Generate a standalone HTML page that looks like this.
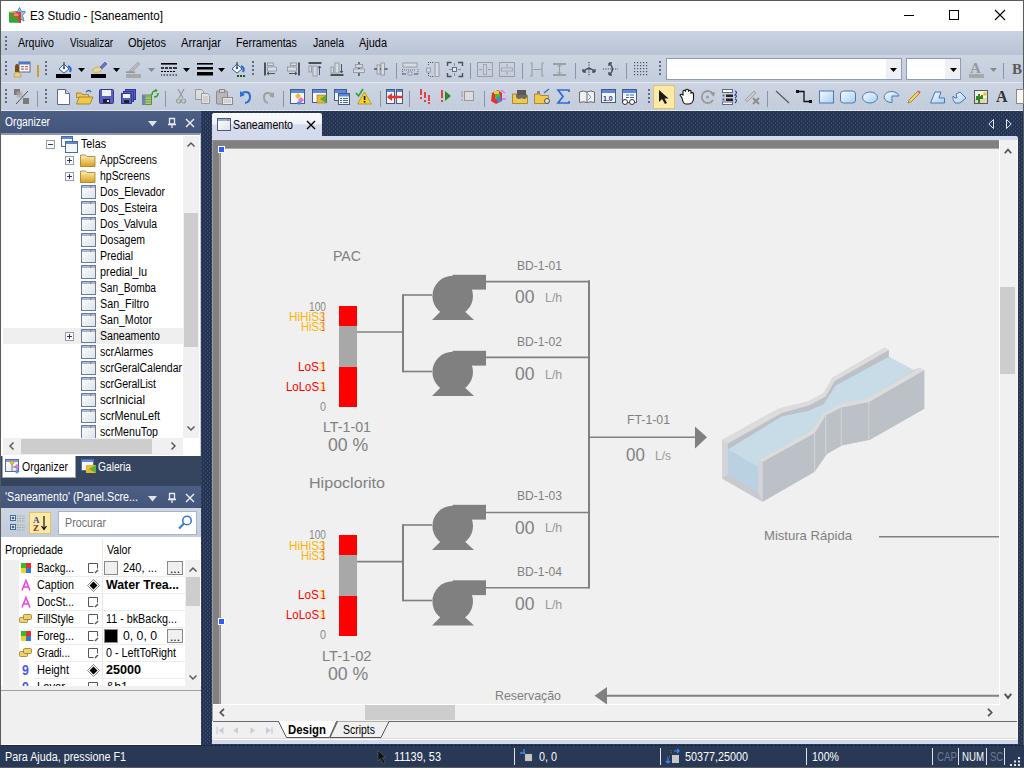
<!DOCTYPE html>
<html><head><meta charset="utf-8">
<style>
*{box-sizing:border-box;margin:0;padding:0}
html,body{width:1024px;height:768px;overflow:hidden;background:#2c3b57;font-family:'Liberation Sans', sans-serif;font-size:12px;color:#000;position:relative}
.a{position:absolute}
.t{white-space:pre}
svg{overflow:visible}
</style></head><body>
<svg class="a" style="left:0;top:110px" width="1024" height="635"><defs><pattern id="nv" width="4" height="4" patternUnits="userSpaceOnUse"><rect width="4" height="4" fill="#24334f"/><rect x="1" y="2" width="1" height="1.6" fill="#3d5178"/><rect x="3" y="0" width="1" height="1.6" fill="#3d5178"/></pattern></defs><rect width="1024" height="635" fill="url(#nv)"/></svg>
<div class="a" style="left:0px;top:0px;width:1024px;height:31px;background:#fff"></div>
<div class="a" style="left:0px;top:0px;width:1024px;height:1px;background:#5a5a5a"></div>
<div class="a" style="left:0px;top:0px;width:1px;height:768px;background:#5a5a5a"></div>
<div class="a" style="left:1023px;top:0px;width:1px;height:768px;background:#5a5a5a"></div>
<svg class="a" style="left:9px;top:7px;" width="17" height="16" viewBox="0 0 17 16"><polygon points="10.5,0.5 12.5,4.5 16.5,4.8 13.5,8.5 15,14 10.5,11.5 6,14 7.5,8.5 4.5,4.8 8.5,4.5" fill="#8ccaf4" stroke="#4a80c0" stroke-width="0.9"/>
<rect x="0" y="4.8" width="12" height="11" rx="0.8" fill="#2fa82f"/><rect x="4.2" y="5" width="7.8" height="5.5" fill="#e8453a"/><rect x="9.5" y="5" width="2.5" height="10.8" fill="#d83a30"/><rect x="5" y="6.5" width="4.5" height="2.5" fill="#f08a80"/><rect x="1" y="4.8" width="6" height="1" fill="#f0a020"/></svg>
<div class="a t" style="left:30.00px;top:8.72px;font-size:12px;line-height:14px;color:#000;font-weight:400;transform:scaleX(0.9678);transform-origin:0 0;">E3 Studio - [Saneamento]</div>
<div class="a" style="left:904px;top:15px;width:10px;height:1px;background:#000"></div>
<div class="a" style="left:949px;top:10px;width:10px;height:10px;border:1px solid #000"></div>
<svg class="a" style="left:995px;top:10px;" width="10" height="10" viewBox="0 0 10 10"><path d="M0,0 L10,10 M10,0 L0,10" stroke="#000" stroke-width="1.1"/></svg>
<div class="a" style="left:1px;top:31px;width:1022px;height:24px;background:linear-gradient(#cbd3e2,#b9c3d5)"></div>
<div class="a" style="left:5px;top:36px;width:2px;height:2px;background:#5d6b84"></div>
<div class="a" style="left:5px;top:40px;width:2px;height:2px;background:#5d6b84"></div>
<div class="a" style="left:5px;top:44px;width:2px;height:2px;background:#5d6b84"></div>
<div class="a" style="left:5px;top:48px;width:2px;height:2px;background:#5d6b84"></div>
<div class="a t" style="left:18.00px;top:36.22px;font-size:12px;line-height:14px;color:#000;font-weight:400;transform:scaleX(0.8848);transform-origin:0 0;">Arquivo</div>
<div class="a t" style="left:70.00px;top:36.22px;font-size:12px;line-height:14px;color:#000;font-weight:400;transform:scaleX(0.8299);transform-origin:0 0;">Visualizar</div>
<div class="a t" style="left:128.00px;top:36.22px;font-size:12px;line-height:14px;color:#000;font-weight:400;transform:scaleX(0.9188);transform-origin:0 0;">Objetos</div>
<div class="a t" style="left:181.00px;top:36.22px;font-size:12px;line-height:14px;color:#000;font-weight:400;transform:scaleX(0.9370);transform-origin:0 0;">Arranjar</div>
<div class="a t" style="left:236.00px;top:36.22px;font-size:12px;line-height:14px;color:#000;font-weight:400;transform:scaleX(0.8966);transform-origin:0 0;">Ferramentas</div>
<div class="a t" style="left:313.00px;top:36.22px;font-size:12px;line-height:14px;color:#000;font-weight:400;transform:scaleX(0.8763);transform-origin:0 0;">Janela</div>
<div class="a t" style="left:359.00px;top:36.22px;font-size:12px;line-height:14px;color:#000;font-weight:400;transform:scaleX(0.9120);transform-origin:0 0;">Ajuda</div>
<div class="a" style="left:1px;top:55px;width:1022px;height:27px;background:linear-gradient(#cdd5e3,#c3ccdb)"></div>
<div class="a" style="left:1px;top:82px;width:1022px;height:1px;background:#e2e7f0"></div>
<div class="a" style="left:1px;top:83px;width:1022px;height:27px;background:linear-gradient(#cdd5e3,#c3ccdb)"></div>
<div class="a" style="left:1px;top:110px;width:1022px;height:1px;background:#e2e7f0"></div>
<div class="a" style="left:0px;top:745px;width:1024px;height:23px;background:#293955"></div>
<div class="a" style="left:0px;top:767px;width:1024px;height:1px;background:#5a5a5a"></div>
<div class="a" style="left:5px;top:61px;width:2px;height:2px;background:#5d6b84"></div>
<div class="a" style="left:5px;top:65px;width:2px;height:2px;background:#5d6b84"></div>
<div class="a" style="left:5px;top:69px;width:2px;height:2px;background:#5d6b84"></div>
<div class="a" style="left:5px;top:73px;width:2px;height:2px;background:#5d6b84"></div>
<div class="a" style="left:45px;top:61px;width:2px;height:2px;background:#5d6b84"></div>
<div class="a" style="left:45px;top:65px;width:2px;height:2px;background:#5d6b84"></div>
<div class="a" style="left:45px;top:69px;width:2px;height:2px;background:#5d6b84"></div>
<div class="a" style="left:45px;top:73px;width:2px;height:2px;background:#5d6b84"></div>
<svg class="a" style="left:13px;top:61px;" width="18" height="17" viewBox="0 0 18 17"><rect x="6" y="1" width="11" height="10" fill="#fff" stroke="#5a6a8a"/><rect x="6" y="1" width="11" height="2.5" fill="#4a7ad0"/>
<rect x="8" y="5" width="3" height="1.2" fill="#e8602a"/><rect x="12" y="5" width="3" height="1.2" fill="#e8602a"/><rect x="8" y="7.5" width="3" height="1.2" fill="#4a7ad0"/><rect x="12" y="7.5" width="3" height="1.2" fill="#e8602a"/>
<path d="M4,3 Q6,3 6,6 L6,11 L2,11 L2,6 Q2,3 4,3Z" fill="#7a4a10"/><path d="M1,16 L1,14 Q2,11 4,11 Q6,11 8,14 L8,16Z" fill="#e8d27a" stroke="#a88a30" stroke-width="0.6"/></svg>
<div class="a" style="left:37px;top:65px;width:2px;height:12px;background:#e8c04a;border:1px solid #c8a030"></div>
<svg class="a" style="left:56px;top:61px;" width="17" height="17" viewBox="0 0 17 17"><path d="M3,8 L8,3 L13,8 L8,12Z" fill="#f4f8ff" stroke="#3060a8" stroke-width="1"/><path d="M8,1 L8,7" stroke="#555" stroke-width="1.4"/><circle cx="8" cy="7" r="1.2" fill="#555"/>
<path d="M12,5 Q16,7 14,11" fill="none" stroke="#2e6ad8" stroke-width="2.2"/><rect x="0" y="13" width="15" height="4" fill="#000"/></svg>
<svg class="a" style="left:78px;top:68px;" width="7" height="4" viewBox="0 0 7 4"><polygon points="0,0 7,0 3.5,4" fill="#000"/></svg>
<svg class="a" style="left:91px;top:61px;" width="17" height="17" viewBox="0 0 17 17"><path d="M1,9 Q5,5 9,6 L11,8 Q9,12 5,12 Q2,12 1,9Z" fill="#e6d690" stroke="#b09a40" stroke-width="0.6"/><path d="M9,6 L14,1 L16,3 L11,8Z" fill="#7070c8" stroke="#505090" stroke-width="0.6"/><rect x="0" y="13" width="15" height="4" fill="#000"/></svg>
<svg class="a" style="left:113px;top:68px;" width="7" height="4" viewBox="0 0 7 4"><polygon points="0,0 7,0 3.5,4" fill="#000"/></svg>
<svg class="a" style="left:126px;top:61px;" width="17" height="17" viewBox="0 0 17 17"><path d="M3,10 L12,1 L14,3 L5,12Z" fill="#b8b8b8" stroke="#9a9a9a" stroke-width="0.6"/><rect x="0" y="10.5" width="9" height="1.3" fill="#8a8a8a"/><rect x="0" y="13" width="15" height="4" fill="#a8a8a8"/></svg>
<svg class="a" style="left:148px;top:68px;" width="7" height="4" viewBox="0 0 7 4"><polygon points="0,0 7,0 3.5,4" fill="#8a8a8a"/></svg>
<svg class="a" style="left:161px;top:62px;" width="17" height="15" viewBox="0 0 17 15"><rect x="0" y="1" width="16" height="1.6" fill="#000"/><path d="M0,6 h3 M4,6 h3 M8,6 h3 M12,6 h4" stroke="#000" stroke-width="1.4"/><path d="M0,9.5 h2 M3,9.5 h2 M6,9.5 h2 M9,9.5 h2 M12,9.5 h2" stroke="#000" stroke-width="1.2"/><path d="M0,13 h1 M2.5,13 h1.5 M5.5,13 h1.5 M8.5,13 h1.5 M11.5,13 h1.5 M14.5,13 h1.5" stroke="#000" stroke-width="1.2"/></svg>
<svg class="a" style="left:183px;top:68px;" width="7" height="4" viewBox="0 0 7 4"><polygon points="0,0 7,0 3.5,4" fill="#000"/></svg>
<svg class="a" style="left:197px;top:62px;" width="17" height="15" viewBox="0 0 17 15"><rect x="0" y="1" width="16" height="1.6" fill="#000"/><rect x="0" y="5" width="16" height="2.5" fill="#000"/><rect x="0" y="10" width="16" height="3.5" fill="#000"/></svg>
<svg class="a" style="left:218px;top:68px;" width="7" height="4" viewBox="0 0 7 4"><polygon points="0,0 7,0 3.5,4" fill="#000"/></svg>
<svg class="a" style="left:229px;top:61px;" width="17" height="17" viewBox="0 0 17 17"><path d="M3,8 L8,3 L13,8 L8,12Z" fill="#f4f8ff" stroke="#3060a8" stroke-width="1"/><path d="M8,1 L8,7" stroke="#555" stroke-width="1.4"/><circle cx="8" cy="7" r="1.2" fill="#555"/>
<path d="M12,5 Q16,7 14,11" fill="none" stroke="#2e6ad8" stroke-width="2.2"/><rect x="8" y="14" width="2" height="2" fill="#1a5a1a"/><rect x="11" y="14" width="2" height="2" fill="#1a5a1a"/><rect x="14" y="14" width="2" height="2" fill="#1a5a1a"/></svg>
<div class="a" style="left:252px;top:61px;width:2px;height:2px;background:#5d6b84"></div>
<div class="a" style="left:252px;top:65px;width:2px;height:2px;background:#5d6b84"></div>
<div class="a" style="left:252px;top:69px;width:2px;height:2px;background:#5d6b84"></div>
<div class="a" style="left:252px;top:73px;width:2px;height:2px;background:#5d6b84"></div>
<svg class="a" style="left:264px;top:62px;" width="16" height="14" viewBox="0 0 16 14"><rect x="0" y="0.5" width="2" height="13" fill="#4a5260"/><rect x="3.5" y="1" width="6" height="2.5" fill="#d8dce2" stroke="#8a909a" stroke-width="0.8"/><rect x="3.5" y="5" width="9" height="4" fill="#d8dce2" stroke="#8a909a" stroke-width="0.8"/><path d="M3,11.5 h8 M3,11.5 l2,-1.5 M3,11.5 l2,1.5" stroke="#4a5260" stroke-width="1"/></svg>
<svg class="a" style="left:286px;top:62px;" width="16" height="14" viewBox="0 0 16 14"><rect x="12" y="0.5" width="2" height="13" fill="#4a5260"/><rect x="4.5" y="1" width="6" height="2.5" fill="#d8dce2" stroke="#8a909a" stroke-width="0.8"/><rect x="1.5" y="5" width="9" height="4" fill="#d8dce2" stroke="#8a909a" stroke-width="0.8"/><path d="M3,11.5 h8 M11,11.5 l-2,-1.5 M11,11.5 l-2,1.5" stroke="#4a5260" stroke-width="1"/></svg>
<svg class="a" style="left:308px;top:62px;" width="16" height="15" viewBox="0 0 16 15"><rect x="0.5" y="0" width="13" height="2" fill="#4a5260"/><rect x="1" y="4" width="2.5" height="6" fill="#d8dce2" stroke="#8a909a" stroke-width="0.8"/><rect x="5" y="4" width="4" height="10" fill="#d8dce2" stroke="#8a909a" stroke-width="0.8"/><path d="M11.5,4 v9 M11.5,4 l-1.5,2 M11.5,4 l1.5,2" stroke="#4a5260" stroke-width="1"/></svg>
<svg class="a" style="left:330px;top:62px;" width="16" height="15" viewBox="0 0 16 15"><rect x="0.5" y="12" width="13" height="2" fill="#4a5260"/><rect x="1" y="5" width="2.5" height="6" fill="#d8dce2" stroke="#8a909a" stroke-width="0.8"/><rect x="5" y="1" width="4" height="10" fill="#d8dce2" stroke="#8a909a" stroke-width="0.8"/><path d="M11.5,2 v9 M11.5,11 l-1.5,-2 M11.5,11 l1.5,-2" stroke="#4a5260" stroke-width="1"/></svg>
<svg class="a" style="left:353px;top:62px;" width="12" height="15" viewBox="0 0 12 15"><rect x="2.5" y="2.5" width="7" height="3" fill="#d8dce2" stroke="#8a909a" stroke-width="0.8"/><rect x="0.5" y="7" width="11" height="3.5" fill="#d8dce2" stroke="#8a909a" stroke-width="0.8"/><path d="M6,0 v2 M6,6 v1 M6,11 v3" stroke="#4a5260" stroke-width="1.5"/></svg>
<svg class="a" style="left:374px;top:62px;" width="14" height="15" viewBox="0 0 14 15"><rect x="3" y="3" width="3" height="9" fill="#d8dce2" stroke="#8a909a" stroke-width="0.8"/><rect x="7" y="1" width="3.5" height="12" fill="#d8dce2" stroke="#8a909a" stroke-width="0.8"/><path d="M0,7 h3 M6,7 h1 M10.5,7 h3" stroke="#4a5260" stroke-width="1.5"/></svg>
<div class="a" style="left:396px;top:63px;width:1px;height:16px;background:#8a94a6"></div>
<svg class="a" style="left:402px;top:62px;" width="17" height="15" viewBox="0 0 17 15"><rect x="1" y="1" width="14" height="4" fill="#d8dce2" stroke="#8a909a" stroke-width="0.8"/><path d="M0.5,7 v5 M16,7 v5 M2,8 h12" stroke="#4a5260" stroke-width="0.8" stroke-dasharray="1,1"/><rect x="6" y="10" width="4" height="3" fill="#d8dce2" stroke="#8a909a" stroke-width="0.8"/><path d="M0,12 h4 M12,12 h4" stroke="#4a5260" stroke-width="1.2"/></svg>
<svg class="a" style="left:426px;top:62px;" width="15" height="15" viewBox="0 0 15 15"><rect x="9" y="0.5" width="4" height="14" fill="#d8dce2" stroke="#8a909a" stroke-width="0.8"/><rect x="0.5" y="6" width="4" height="4" fill="#d8dce2" stroke="#8a909a" stroke-width="0.8"/><path d="M2.5,0 v4 M2.5,11 v4 M4,0.5 h4 M4,14.5 h4" stroke="#4a5260" stroke-width="1" stroke-dasharray="1,1"/></svg>
<svg class="a" style="left:447px;top:62px;" width="16" height="15" viewBox="0 0 16 15"><path d="M0.5,4 v-3.5 h4 M11,0.5 h4.5 v3.5 M15.5,11 v3.5 h-4 M4.5,14.5 h-4 v-3.5" fill="none" stroke="#4a5260" stroke-width="1.4"/><rect x="5.5" y="5.5" width="4" height="4" fill="#e8e8e8" stroke="#4a5260" stroke-width="0.8"/><path d="M7.5,1 v3 M7.5,11 v3 M2,7.5 h3 M11,7.5 h3" stroke="#8a909a" stroke-width="1"/></svg>
<div class="a" style="left:470px;top:63px;width:1px;height:16px;background:#8a94a6"></div>
<svg class="a" style="left:477px;top:62px;" width="16" height="15" viewBox="0 0 16 15"><rect x="0.5" y="0.5" width="15" height="14" fill="none" stroke="#9a9ea6"/><rect x="6.5" y="2.5" width="3" height="10" fill="#d0d4da" stroke="#9a9ea6" stroke-width="0.8"/><path d="M2,7.5 h3 M11,7.5 h3" stroke="#9a9ea6" stroke-width="1"/></svg>
<svg class="a" style="left:499px;top:62px;" width="16" height="15" viewBox="0 0 16 15"><rect x="0.5" y="0.5" width="15" height="14" fill="none" stroke="#9a9ea6"/><rect x="2.5" y="6" width="11" height="3" fill="#d0d4da" stroke="#9a9ea6" stroke-width="0.8"/><path d="M8,2 v3 M8,10 v3" stroke="#9a9ea6" stroke-width="1"/></svg>
<div class="a" style="left:522px;top:63px;width:1px;height:16px;background:#8a94a6"></div>
<svg class="a" style="left:529px;top:62px;" width="16" height="15" viewBox="0 0 16 15"><path d="M1,1 h2 v13 h-2 M15,1 h-2 v13 h2 M4,7.5 h8" fill="none" stroke="#9a9ea6" stroke-width="1.2"/></svg>
<svg class="a" style="left:552px;top:62px;" width="15" height="15" viewBox="0 0 15 15"><path d="M1,1 h13 v2 h-13Z M1,12 h13 v2 h-13Z" fill="#9a9ea6"/><path d="M7.5,3 v9 M5.5,5 l2,-2 l2,2 M5.5,10 l2,2 l2,-2" fill="none" stroke="#9a9ea6" stroke-width="1"/></svg>
<div class="a" style="left:575px;top:63px;width:1px;height:16px;background:#8a94a6"></div>
<svg class="a" style="left:582px;top:62px;" width="14" height="15" viewBox="0 0 14 15"><path d="M7,0 v14" stroke="#4a5260" stroke-width="1.2" stroke-dasharray="1.2,1.2"/><path d="M1,10 Q7,3 13,10 M1,10 l0,-3 M1,10 l3,0 M13,10 l0,-3 M13,10 l-3,0" fill="none" stroke="#4a5260" stroke-width="1.4"/></svg>
<svg class="a" style="left:603px;top:62px;" width="15" height="15" viewBox="0 0 15 15"><path d="M0,7 h15" stroke="#4a5260" stroke-width="1.2" stroke-dasharray="1.2,1.2"/><path d="M6,1 Q13,7 6,13 M6,1 l3,0 M6,1 l0,3 M6,13 l3,0 M6,13 l0,-3" fill="none" stroke="#4a5260" stroke-width="1.4"/></svg>
<div class="a" style="left:626px;top:63px;width:1px;height:16px;background:#8a94a6"></div>
<svg class="a" style="left:633px;top:61px;" width="15" height="15" viewBox="0 0 15 15"><rect x="1" y="1" width="1.2" height="1.2" fill="#4a5260"/><rect x="1" y="4" width="1.2" height="1.2" fill="#4a5260"/><rect x="1" y="7" width="1.2" height="1.2" fill="#4a5260"/><rect x="1" y="10" width="1.2" height="1.2" fill="#4a5260"/><rect x="1" y="13" width="1.2" height="1.2" fill="#4a5260"/><rect x="4" y="1" width="1.2" height="1.2" fill="#4a5260"/><rect x="4" y="4" width="1.2" height="1.2" fill="#4a5260"/><rect x="4" y="7" width="1.2" height="1.2" fill="#4a5260"/><rect x="4" y="10" width="1.2" height="1.2" fill="#4a5260"/><rect x="4" y="13" width="1.2" height="1.2" fill="#4a5260"/><rect x="7" y="1" width="1.2" height="1.2" fill="#4a5260"/><rect x="7" y="4" width="1.2" height="1.2" fill="#4a5260"/><rect x="7" y="7" width="1.2" height="1.2" fill="#4a5260"/><rect x="7" y="10" width="1.2" height="1.2" fill="#4a5260"/><rect x="7" y="13" width="1.2" height="1.2" fill="#4a5260"/><rect x="10" y="1" width="1.2" height="1.2" fill="#4a5260"/><rect x="10" y="4" width="1.2" height="1.2" fill="#4a5260"/><rect x="10" y="7" width="1.2" height="1.2" fill="#4a5260"/><rect x="10" y="10" width="1.2" height="1.2" fill="#4a5260"/><rect x="10" y="13" width="1.2" height="1.2" fill="#4a5260"/><rect x="13" y="1" width="1.2" height="1.2" fill="#4a5260"/><rect x="13" y="4" width="1.2" height="1.2" fill="#4a5260"/><rect x="13" y="7" width="1.2" height="1.2" fill="#4a5260"/><rect x="13" y="10" width="1.2" height="1.2" fill="#4a5260"/><rect x="13" y="13" width="1.2" height="1.2" fill="#4a5260"/></svg>
<div class="a" style="left:659px;top:61px;width:2px;height:2px;background:#5d6b84"></div>
<div class="a" style="left:659px;top:65px;width:2px;height:2px;background:#5d6b84"></div>
<div class="a" style="left:659px;top:69px;width:2px;height:2px;background:#5d6b84"></div>
<div class="a" style="left:659px;top:73px;width:2px;height:2px;background:#5d6b84"></div>
<div class="a" style="left:666px;top:58px;width:236px;height:22px;background:#fff;border:1px solid #8e9bb2"></div>
<div class="a" style="left:886px;top:59px;width:15px;height:20px;background:#eef0f4"></div>
<svg class="a" style="left:890px;top:68px;" width="7" height="4" viewBox="0 0 7 4"><polygon points="0,0 7,0 3.5,4" fill="#000"/></svg>
<div class="a" style="left:906px;top:58px;width:55px;height:22px;background:#fff;border:1px solid #8e9bb2"></div>
<div class="a" style="left:945px;top:59px;width:15px;height:20px;background:#eef0f4"></div>
<svg class="a" style="left:950px;top:68px;" width="7" height="4" viewBox="0 0 7 4"><polygon points="0,0 7,0 3.5,4" fill="#000"/></svg>
<svg class="a" style="left:969px;top:61px;" width="16" height="17" viewBox="0 0 16 17"><text x="1" y="12" font-family="Liberation Serif" font-size="15" font-weight="bold" fill="#9a9a9a">A</text><rect x="0" y="13" width="15" height="4" fill="#a8a8a8"/></svg>
<svg class="a" style="left:990px;top:68px;" width="7" height="4" viewBox="0 0 7 4"><polygon points="0,0 7,0 3.5,4" fill="#8a8a8a"/></svg>
<div class="a" style="left:1003px;top:63px;width:1px;height:16px;background:#8a94a6"></div>
<svg class="a" style="left:1011px;top:61px;" width="13" height="17" viewBox="0 0 13 17"><text x="1" y="13" font-family="Liberation Serif" font-size="15" font-weight="bold" fill="#5a5a5a">B</text></svg>
<div class="a" style="left:5px;top:89px;width:2px;height:2px;background:#5d6b84"></div>
<div class="a" style="left:5px;top:93px;width:2px;height:2px;background:#5d6b84"></div>
<div class="a" style="left:5px;top:97px;width:2px;height:2px;background:#5d6b84"></div>
<div class="a" style="left:5px;top:101px;width:2px;height:2px;background:#5d6b84"></div>
<div class="a" style="left:45px;top:89px;width:2px;height:2px;background:#5d6b84"></div>
<div class="a" style="left:45px;top:93px;width:2px;height:2px;background:#5d6b84"></div>
<div class="a" style="left:45px;top:97px;width:2px;height:2px;background:#5d6b84"></div>
<div class="a" style="left:45px;top:101px;width:2px;height:2px;background:#5d6b84"></div>
<svg class="a" style="left:14px;top:89px;" width="16" height="16" viewBox="0 0 16 16"><rect x="0" y="0" width="6" height="6" fill="#7a7a7a"/><rect x="2.5" y="2.5" width="6" height="6" fill="#a8a8a8" opacity="0.7"/><rect x="9" y="9" width="6" height="6" fill="#7a7a7a"/><path d="M2,15 L14,2" stroke="#404040" stroke-width="0.9"/></svg>
<div class="a" style="left:37px;top:91px;width:1px;height:16px;background:#8a94a6"></div>
<svg class="a" style="left:57px;top:89px;" width="13" height="16" viewBox="0 0 13 16"><path d="M0.5,0.5 h8 l4,4 v11 h-12Z" fill="#fafcff" stroke="#5a6a8a"/><path d="M8.5,0.5 v4 h4" fill="#d0d8e8" stroke="#5a6a8a"/></svg>
<svg class="a" style="left:76px;top:89px;" width="17" height="16" viewBox="0 0 17 16"><path d="M0.5,4 h5 l1,1.5 h6 v3 h-12Z" fill="#e8c860" stroke="#9a7a20" stroke-width="0.8"/><path d="M0.5,15 L3,8 h14 L14,15Z" fill="#f2c84a" stroke="#9a7a20" stroke-width="0.8"/><path d="M10,3 Q13,0 15,3" fill="none" stroke="#3a6ab0" stroke-width="1.4"/></svg>
<svg class="a" style="left:99px;top:89px;" width="15" height="15" viewBox="0 0 15 15"><rect x="0.5" y="0.5" width="14" height="14" rx="1" fill="#5a60c8" stroke="#303890"/><rect x="3" y="1" width="9" height="6" fill="#f0f4ff"/><rect x="4" y="10" width="7" height="4" fill="#222"/><rect x="8" y="11" width="2" height="2" fill="#ddd"/></svg>
<svg class="a" style="left:121px;top:89px;" width="15" height="15" viewBox="0 0 15 15"><rect x="4.5" y="0.5" width="10" height="10" fill="#5a60c8" stroke="#303890"/><rect x="2.5" y="2.5" width="10" height="10" fill="#5a60c8" stroke="#303890"/><rect x="0.5" y="4.5" width="10" height="10" fill="#5a60c8" stroke="#303890"/><rect x="2" y="5" width="7" height="4" fill="#f0f4ff"/><rect x="3" y="11" width="5" height="3" fill="#222"/></svg>
<svg class="a" style="left:142px;top:89px;" width="17" height="16" viewBox="0 0 17 16"><rect x="0.5" y="6" width="9" height="9.5" fill="#a8d070" stroke="#4a7a2a" stroke-width="0.8"/><rect x="0.5" y="6" width="3" height="9.5" fill="#7a88d0"/><path d="M1,8 h8 M1,10.5 h8 M1,13 h8" stroke="#5a7a3a" stroke-width="0.6"/><path d="M10,6 Q10,1 15,2 M15,2 l-2,-1.5 M12,8 Q16,8 16,4" fill="none" stroke="#2ea02e" stroke-width="1.6"/></svg>
<div class="a" style="left:165px;top:91px;width:1px;height:16px;background:#8a94a6"></div>
<svg class="a" style="left:176px;top:89px;" width="10" height="15" viewBox="0 0 10 15"><path d="M2,0 L7,9 M8,0 L3,9" stroke="#9a9a9a" stroke-width="1.3"/><circle cx="2.5" cy="12" r="2" fill="none" stroke="#9a9a9a" stroke-width="1.2"/><circle cx="7.5" cy="12" r="2" fill="none" stroke="#9a9a9a" stroke-width="1.2"/></svg>
<svg class="a" style="left:195px;top:89px;" width="15" height="15" viewBox="0 0 15 15"><path d="M0.5,0.5 h6 l2,2 v8 h-8Z" fill="#dcdcdc" stroke="#9a9a9a"/><path d="M6.5,4.5 h6 l2,2 v8 h-8Z" fill="#e4e4e4" stroke="#9a9a9a"/><path d="M8,8 h5 M8,10 h5 M8,12 h5" stroke="#aaa" stroke-width="0.7"/></svg>
<svg class="a" style="left:216px;top:89px;" width="17" height="16" viewBox="0 0 17 16"><rect x="0.5" y="2" width="11" height="13" rx="1" fill="#b8b8b8" stroke="#8a8a8a"/><rect x="3.5" y="0.5" width="5" height="3" fill="#d0d0d0" stroke="#8a8a8a"/><rect x="6.5" y="8.5" width="10" height="7" fill="#e8e8e8" stroke="#8a8a8a"/><path d="M8,11 h7 M8,13 h7" stroke="#aaa" stroke-width="0.7"/></svg>
<svg class="a" style="left:240px;top:90px;" width="12" height="14" viewBox="0 0 12 14"><path d="M2,3 Q10,0 10,7 Q10,12 5,13" fill="none" stroke="#2e6ad8" stroke-width="2"/><path d="M0,1 L0,7 L5,5Z" fill="#2e6ad8"/></svg>
<svg class="a" style="left:262px;top:90px;" width="12" height="14" viewBox="0 0 12 14"><path d="M10,4 Q2,1 2,7 Q2,12 6,13" fill="none" stroke="#a0a0a0" stroke-width="2"/><path d="M12,2 L12,8 L7,6Z" fill="#a0a0a0"/></svg>
<div class="a" style="left:283px;top:91px;width:1px;height:16px;background:#8a94a6"></div>
<svg class="a" style="left:290px;top:89px;" width="15" height="15" viewBox="0 0 15 15"><rect x="0.5" y="0.5" width="14" height="14" fill="#f4f6fa" stroke="#4a5a7a"/><rect x="1" y="1" width="13" height="3" fill="#5a8ae0"/><path d="M8,4 l3,3 l-3,3 l-3,-3Z" fill="#f0c020"/><path d="M11,8 l3,3 l-3,3 l-3,-3Z" fill="#e070e0"/><path d="M9,12 l2.5,2 l-2.5,2 l-2.5,-2Z" fill="#4a8ae0"/></svg>
<svg class="a" style="left:312px;top:89px;" width="15" height="14" viewBox="0 0 15 14"><rect x="0.5" y="0.5" width="14" height="13" fill="#f4f6fa" stroke="#4a5a7a"/><rect x="1" y="1" width="13" height="3" fill="#5a8ae0"/><rect x="5" y="6" width="9" height="8" fill="#e8b830" stroke="#9a7a20" stroke-width="0.6"/><path d="M8,10 l6,-4 v8Z" fill="#5ab030"/></svg>
<svg class="a" style="left:334px;top:89px;" width="13" height="12" viewBox="0 0 13 12"><rect x="0.5" y="0.5" width="12" height="11" fill="#f4f6fa" stroke="#4a5a7a"/><rect x="1" y="1" width="11" height="3" fill="#5a8ae0"/></svg>
<svg class="a" style="left:338px;top:93px;" width="12" height="12" viewBox="0 0 12 12"><rect x="0.5" y="0.5" width="11" height="11" fill="#f4f6fa" stroke="#4a5a7a"/><rect x="1" y="1" width="10" height="2.5" fill="#5a8ae0"/><path d="M2,5.5 h2 M5,5.5 h5 M2,7.5 h2 M5,7.5 h5 M2,9.5 h2 M5,9.5 h5" stroke="#3a6ab0" stroke-width="1"/></svg>
<svg class="a" style="left:356px;top:89px;" width="16" height="16" viewBox="0 0 16 16"><path d="M0,4 L2.5,7 L7,0" fill="none" stroke="#2ea02e" stroke-width="1.6"/><path d="M8.5,3 L15.5,15 H1.5Z" fill="#f4d030" stroke="#b09020" stroke-width="0.8"/><rect x="7.8" y="7" width="1.6" height="4" fill="#222"/><rect x="7.8" y="12" width="1.6" height="1.6" fill="#222"/></svg>
<div class="a" style="left:380px;top:91px;width:1px;height:16px;background:#8a94a6"></div>
<svg class="a" style="left:386px;top:89px;" width="17" height="15" viewBox="0 0 17 15"><rect x="0.5" y="0.5" width="8" height="14" fill="#f4f6fa" stroke="#4a5a7a"/><rect x="1" y="1" width="7" height="2" fill="#5a8ae0"/><rect x="10.5" y="0.5" width="6" height="14" fill="#f4f6fa" stroke="#4a5a7a"/><rect x="11" y="1" width="5" height="2" fill="#5a8ae0"/><path d="M2,8 h14" stroke="#ee3030" stroke-width="2.5"/><path d="M1,8 l5,-4 v8Z" fill="#ee3030"/></svg>
<div class="a" style="left:409px;top:91px;width:1px;height:16px;background:#8a94a6"></div>
<svg class="a" style="left:420px;top:89px;" width="11" height="15" viewBox="0 0 11 15"><path d="M1,0 v6 M1,8 v2 M5,3 v6 M5,11 v2 M9,6 v6 M9,13 v2" stroke="#e83030" stroke-width="1.8"/></svg>
<svg class="a" style="left:441px;top:89px;" width="11" height="15" viewBox="0 0 11 15"><path d="M1,1 v8 M1,11 v2" stroke="#e83030" stroke-width="1.8"/><path d="M4,2 L10,7 L4,12Z" fill="#2a8a2a"/></svg>
<svg class="a" style="left:461px;top:90px;" width="13" height="12" viewBox="0 0 13 12"><path d="M1,1 v6 M1,9 v2" stroke="#b0b0b0" stroke-width="1.6"/><rect x="3.5" y="1.5" width="9" height="9" fill="#dcdcdc" stroke="#9a9a9a"/></svg>
<div class="a" style="left:484px;top:91px;width:1px;height:16px;background:#8a94a6"></div>
<svg class="a" style="left:490px;top:89px;" width="16" height="16" viewBox="0 0 16 16"><path d="M2,4 L8,1 L12,4 L12,12 L6,15 L1,12Z" fill="#e83030"/><rect x="5" y="5" width="5" height="5" fill="#3ac03a"/><rect x="7" y="8" width="4" height="5" fill="#3a8ae0"/><rect x="4" y="2" width="5" height="3" fill="#f0d020"/><path d="M11,1 L15,4 M12,10 h4" stroke="#e070e0" stroke-width="1.5"/></svg>
<svg class="a" style="left:512px;top:89px;" width="17" height="15" viewBox="0 0 17 15"><path d="M0.5,5 h5 l1,1.5 h9 v8 h-15Z" fill="#f0c850" stroke="#9a7a20" stroke-width="0.8"/><circle cx="7" cy="7" r="3" fill="#6a6a6a"/><circle cx="12" cy="7" r="3" fill="#6a6a6a"/><rect x="5" y="1" width="9" height="5" fill="#5a5a5a"/></svg>
<svg class="a" style="left:534px;top:89px;" width="17" height="16" viewBox="0 0 17 16"><path d="M0.5,5 h5 l1,1.5 h8 v8 h-14Z" fill="#f0c850" stroke="#9a7a20" stroke-width="0.8"/><path d="M3,2 h3 v3 h-3Z" fill="#888"/><circle cx="13" cy="12" r="2.5" fill="#ddd" stroke="#555"/><path d="M10,4 L15,0" stroke="#3a6ab0" stroke-width="1.3"/></svg>
<svg class="a" style="left:557px;top:89px;" width="13" height="15" viewBox="0 0 13 15"><path d="M12,3 V1 H1 L6,7.5 L1,14 H12 V12" fill="none" stroke="#2e6ad8" stroke-width="1.7"/></svg>
<svg class="a" style="left:579px;top:90px;" width="16" height="13" viewBox="0 0 16 13"><path d="M0.5,2 Q4,0 8,2 Q12,0 15.5,2 V12.5 Q12,11 8,12.5 Q4,11 0.5,12.5Z" fill="#f0f0f0" stroke="#6a6a6a"/><path d="M8,2 v10" stroke="#6a6a6a"/><path d="M9,4 l3,3 l-3,3" fill="none" stroke="#4a8ae0" stroke-width="0.8"/></svg>
<svg class="a" style="left:601px;top:89px;" width="15" height="14" viewBox="0 0 15 14"><rect x="0.5" y="0.5" width="14" height="13" fill="#f4f6fa" stroke="#4a5a7a"/><rect x="1" y="1" width="13" height="3" fill="#5a8ae0"/><text x="2" y="12" font-family="Liberation Sans" font-size="7" font-weight="bold" fill="#203a8a">1.0</text></svg>
<svg class="a" style="left:622px;top:89px;" width="15" height="14" viewBox="0 0 15 14"><rect x="0.5" y="0.5" width="14" height="13" fill="#f4f6fa" stroke="#4a5a7a"/><rect x="1" y="1" width="13" height="3" fill="#5a8ae0"/><path d="M4,6 h3 M8,6 h4 M4,8.5 h3 M8,8.5 h4" stroke="#3a6ab0" stroke-width="1"/><circle cx="3" cy="13" r="2.5" fill="#fff" stroke="#333"/><circle cx="10" cy="13" r="2.5" fill="#fff" stroke="#333"/></svg>
<div class="a" style="left:648px;top:89px;width:2px;height:2px;background:#5d6b84"></div>
<div class="a" style="left:648px;top:93px;width:2px;height:2px;background:#5d6b84"></div>
<div class="a" style="left:648px;top:97px;width:2px;height:2px;background:#5d6b84"></div>
<div class="a" style="left:648px;top:101px;width:2px;height:2px;background:#5d6b84"></div>
<div class="a" style="left:653px;top:85px;width:22px;height:24px;background:#fde9a6;border:1px solid #e2c26a"></div>
<svg class="a" style="left:658px;top:90px;" width="11" height="15" viewBox="0 0 11 15"><path d="M1,0 L1,12 L4,9 L7,14 L9,13 L6.5,8.5 L10.5,8.5Z" fill="#1a1a1a"/></svg>
<svg class="a" style="left:679px;top:89px;" width="16" height="16" viewBox="0 0 16 16"><path d="M3,9 L1,6 Q2,4.5 4,6 V2 Q5,0.5 6.5,2 V1 Q8,-0.5 9.5,1 V2 Q11,0.5 12,2 V4 Q13.5,3 14.5,4.5 V10 Q14,15 9,15 H7 Q4,15 3,9Z" fill="#fff" stroke="#111" stroke-width="1.1"/></svg>
<svg class="a" style="left:701px;top:90px;" width="14" height="14" viewBox="0 0 14 14"><path d="M12,4 A6,6 0 1 0 12,10" fill="none" stroke="#9a9a9a" stroke-width="1.8"/><path d="M9,3 L14,2 L13,7Z" fill="#9a9a9a"/><circle cx="6.5" cy="7" r="1.5" fill="#9a9a9a"/></svg>
<svg class="a" style="left:722px;top:89px;" width="17" height="16" viewBox="0 0 17 16"><rect x="0.5" y="0.5" width="10" height="3" fill="#fff" stroke="#5a6a8a"/><rect x="0.5" y="5.5" width="2" height="2" fill="#5a6a8a"/><rect x="4" y="5.5" width="7" height="2.5" fill="#222"/><rect x="0.5" y="9.5" width="2" height="2" fill="#5a6a8a"/><rect x="4" y="9.5" width="7" height="2.5" fill="#222"/><rect x="0.5" y="13" width="10" height="2.5" fill="#fff" stroke="#5a6a8a"/><path d="M13,2 Q16,3 13,6 Q16,7 13,9 M13,10 Q16,11 13,14" fill="none" stroke="#2a4aa0" stroke-width="1.2"/></svg>
<svg class="a" style="left:744px;top:89px;" width="16" height="16" viewBox="0 0 16 16"><path d="M1,11 L10,2 L12,4 L3,13Z" fill="#c8c8c8" stroke="#9a9a9a" stroke-width="0.8"/><path d="M9,9 L15,15 M15,9 L9,15" stroke="#8a8a8a" stroke-width="1.8"/></svg>
<div class="a" style="left:767px;top:91px;width:1px;height:16px;background:#8a94a6"></div>
<svg class="a" style="left:775px;top:90px;" width="15" height="14" viewBox="0 0 15 14"><path d="M1,1 L14,13" stroke="#555" stroke-width="1.1"/></svg>
<svg class="a" style="left:796px;top:90px;" width="17" height="14" viewBox="0 0 17 14"><rect x="0" y="0" width="3" height="3" fill="#111"/><rect x="13" y="10" width="3" height="3" fill="#111"/><path d="M2,1.5 H8 V11.5 H14" fill="none" stroke="#111" stroke-width="1.3"/></svg>
<svg class="a" style="left:819px;top:90px;" width="16" height="14" viewBox="0 0 16 14"><defs><linearGradient id="g819" x1="0" y1="0" x2="1" y2="1"><stop offset="0" stop-color="#f4f9ff"/><stop offset="1" stop-color="#a8d0f4"/></linearGradient></defs><rect x="0.5" y="1" width="14" height="12" fill="url(#g819)" stroke="#4a7ab0"/></svg>
<svg class="a" style="left:840px;top:90px;" width="16" height="14" viewBox="0 0 16 14"><defs><linearGradient id="g840" x1="0" y1="0" x2="1" y2="1"><stop offset="0" stop-color="#f4f9ff"/><stop offset="1" stop-color="#a8d0f4"/></linearGradient></defs><rect x="0.5" y="1" width="15" height="12" rx="3" fill="url(#g840)" stroke="#4a7ab0"/></svg>
<svg class="a" style="left:862px;top:90px;" width="16" height="14" viewBox="0 0 16 14"><defs><linearGradient id="g862" x1="0" y1="0" x2="1" y2="1"><stop offset="0" stop-color="#f4f9ff"/><stop offset="1" stop-color="#a8d0f4"/></linearGradient></defs><ellipse cx="8" cy="7.5" rx="7.5" ry="5.5" fill="url(#g862)" stroke="#4a7ab0"/></svg>
<svg class="a" style="left:884px;top:90px;" width="16" height="14" viewBox="0 0 16 14"><defs><linearGradient id="g884" x1="0" y1="0" x2="1" y2="1"><stop offset="0" stop-color="#f4f9ff"/><stop offset="1" stop-color="#a8d0f4"/></linearGradient></defs><path d="M15,6 A7.5,5.5 0 1 0 8,12.5 L8,6Z" fill="url(#g884)" stroke="#4a7ab0"/></svg>
<svg class="a" style="left:907px;top:90px;" width="14" height="14" viewBox="0 0 14 14"><path d="M1,13 L2,10 L11,1 L13,3 L4,12Z" fill="#f0d060" stroke="#9a7a20" stroke-width="0.8"/><path d="M11,1 L13,3" stroke="#e06060" stroke-width="2"/></svg>
<svg class="a" style="left:930px;top:90px;" width="16" height="14" viewBox="0 0 16 14"><defs><linearGradient id="g930" x1="0" y1="0" x2="1" y2="1"><stop offset="0" stop-color="#f4f9ff"/><stop offset="1" stop-color="#a8d0f4"/></linearGradient></defs><path d="M0.5,13 L5,2 H11 L9,8 H14.5 V13Z" fill="url(#g930)" stroke="#4a7ab0"/></svg>
<svg class="a" style="left:951px;top:90px;" width="16" height="14" viewBox="0 0 16 14"><defs><linearGradient id="g951" x1="0" y1="0" x2="1" y2="1"><stop offset="0" stop-color="#f4f9ff"/><stop offset="1" stop-color="#a8d0f4"/></linearGradient></defs><path d="M2,6 Q1,9 4,13 L9,13 L15,8 L9,2 L5,4 L6,8 L4,8Z" fill="url(#g951)" stroke="#4a7ab0"/></svg>
<svg class="a" style="left:974px;top:90px;" width="14" height="14" viewBox="0 0 14 14"><rect x="0.5" y="0.5" width="13" height="13" fill="#e8d8a0" stroke="#4a5a7a"/><rect x="1" y="1" width="12" height="7" fill="#f8f0d0"/><path d="M5,13 V4 M3,6 v3 h2 M8,5 v3 h-3" stroke="#2a8a2a" stroke-width="2"/><circle cx="11" cy="4" r="1.8" fill="#f0c020"/></svg>
<svg class="a" style="left:996px;top:89px;" width="14" height="16" viewBox="0 0 14 16"><text x="0" y="13" font-family="Liberation Serif" font-size="16" font-weight="bold" fill="#333">A</text></svg>
<div class="a" style="left:1016px;top:89px;width:8px;height:15px;background:#f8f8f0;border:1px solid #8a8a8a"></div>
<div class="a" style="left:1px;top:111px;width:200px;height:22px;background:linear-gradient(#4c5e83,#43557a)"></div>
<div class="a" style="left:1px;top:133px;width:200px;height:2px;background:#8a97ae"></div>
<div class="a t" style="left:5.00px;top:115.22px;font-size:12px;line-height:14px;color:#fff;font-weight:400;transform:scaleX(0.8541);transform-origin:0 0;">Organizer</div>
<svg class="a" style="left:148px;top:121px;" width="9" height="6" viewBox="0 0 9 6"><polygon points="0,0 9,0 4.5,5.5" fill="#dfe3ea"/></svg>
<svg class="a" style="left:168px;top:118px;" width="8" height="10" viewBox="0 0 8 10"><path d="M1.5,0.5 h5 v5.5 h-5Z M0,6.5 h8 M4,6.5 v3.5" fill="none" stroke="#e8ecf2" stroke-width="1.3"/></svg>
<svg class="a" style="left:186px;top:119px;" width="8" height="8" viewBox="0 0 8 8"><path d="M0,0 L8,8 M8,0 L0,8" stroke="#eef0f4" stroke-width="1.4"/></svg>
<div class="a" style="left:1px;top:135px;width:200px;height:321px;background:#fff"></div>
<div class="a" style="left:200px;top:134px;width:1px;height:322px;background:#c8ced8"></div>
<div class="a" style="left:183px;top:136px;width:16px;height:302px;background:#f0f0f0"></div>
<div class="a" style="left:184px;top:213px;width:14px;height:134px;background:#cdcdcd"></div>
<svg class="a" style="left:187px;top:142px;" width="8" height="5" viewBox="0 0 8 5"><path d="M0.5,4.5 L4,1 L7.5,4.5" fill="none" stroke="#5a5a5a" stroke-width="1.5"/></svg>
<svg class="a" style="left:187px;top:426px;" width="8" height="5" viewBox="0 0 8 5"><path d="M0.5,0.5 L4,4 L7.5,0.5" fill="none" stroke="#5a5a5a" stroke-width="1.5"/></svg>
<div class="a" style="left:3px;top:438px;width:180px;height:17px;background:#f0f0f0"></div>
<div class="a" style="left:21px;top:439px;width:131px;height:15px;background:#cdcdcd"></div>
<svg class="a" style="left:9px;top:442px;" width="5" height="8" viewBox="0 0 5 8"><path d="M4.5,0.5 L1,4 L4.5,7.5" fill="none" stroke="#5a5a5a" stroke-width="1.5"/></svg>
<svg class="a" style="left:171px;top:442px;" width="5" height="8" viewBox="0 0 5 8"><path d="M0.5,0.5 L4,4 L0.5,7.5" fill="none" stroke="#5a5a5a" stroke-width="1.5"/></svg>
<div class="a" style="left:183px;top:438px;width:16px;height:17px;background:#fff"></div>
<svg class="a" style="left:46px;top:140px;" width="9" height="9" viewBox="0 0 9 9"><rect x="0.5" y="0.5" width="8" height="8" fill="#fafafa" stroke="#9a9aa4"/><path d="M2,4.5 h5" stroke="#2a3a70" stroke-width="1"/></svg>
<svg class="a" style="left:61px;top:136px;" width="17" height="17" viewBox="0 0 17 17"><rect x="0.5" y="0.5" width="11" height="10" fill="#fff" stroke="#4a6a9a"/><rect x="1" y="1" width="10" height="2" fill="#5a8ae0"/><rect x="4.5" y="5.5" width="12" height="11" fill="#f4f6fa" stroke="#4a6a9a"/><rect x="5" y="6" width="11" height="2" fill="#5a8ae0"/><rect x="12" y="6.3" width="1.4" height="1.4" fill="#e84040"/></svg>
<div class="a t" style="left:81.00px;top:137.22px;font-size:12px;line-height:14px;color:#000;font-weight:400;transform:scaleX(0.8924);transform-origin:0 0;">Telas</div>
<svg class="a" style="left:65px;top:156px;" width="9" height="9" viewBox="0 0 9 9"><rect x="0.5" y="0.5" width="8" height="8" fill="#fafafa" stroke="#9a9aa4"/><path d="M2,4.5 h5" stroke="#2a3a70" stroke-width="1"/><path d="M4.5,2 v5" stroke="#2a3a70" stroke-width="1"/></svg>
<svg class="a" style="left:80px;top:153px;" width="16" height="14" viewBox="0 0 16 14"><defs><linearGradient id="fg" x1="0" y1="0" x2="0" y2="1"><stop offset="0" stop-color="#fff0b0"/><stop offset="1" stop-color="#d8a020"/></linearGradient></defs><path d="M0.5,2 h5 l1.5,1.5 h8 v10 h-14.5Z" fill="url(#fg)" stroke="#9a7a30" stroke-width="0.8"/></svg>
<div class="a t" style="left:100.00px;top:153.22px;font-size:12px;line-height:14px;color:#000;font-weight:400;transform:scaleX(0.8719);transform-origin:0 0;">AppScreens</div>
<svg class="a" style="left:65px;top:172px;" width="9" height="9" viewBox="0 0 9 9"><rect x="0.5" y="0.5" width="8" height="8" fill="#fafafa" stroke="#9a9aa4"/><path d="M2,4.5 h5" stroke="#2a3a70" stroke-width="1"/><path d="M4.5,2 v5" stroke="#2a3a70" stroke-width="1"/></svg>
<svg class="a" style="left:80px;top:169px;" width="16" height="14" viewBox="0 0 16 14"><defs><linearGradient id="fg" x1="0" y1="0" x2="0" y2="1"><stop offset="0" stop-color="#fff0b0"/><stop offset="1" stop-color="#d8a020"/></linearGradient></defs><path d="M0.5,2 h5 l1.5,1.5 h8 v10 h-14.5Z" fill="url(#fg)" stroke="#9a7a30" stroke-width="0.8"/></svg>
<div class="a t" style="left:100.00px;top:169.22px;font-size:12px;line-height:14px;color:#000;font-weight:400;transform:scaleX(0.8715);transform-origin:0 0;">hpScreens</div>
<div class="a" style="left:3px;top:328px;width:180px;height:16px;background:#efefef"></div>
<svg class="a" style="left:81px;top:185px;" width="15" height="15" viewBox="0 0 15 15"><defs><linearGradient id="sg" x1="0" y1="0" x2="1" y2="1"><stop offset="0" stop-color="#fff"/><stop offset="1" stop-color="#dde2ea"/></linearGradient></defs><rect x="0.5" y="0.5" width="14" height="13" fill="url(#sg)" stroke="#6a7a9a"/><rect x="1" y="1" width="13" height="2" fill="#9ab8e8"/><rect x="9" y="1.3" width="1.3" height="1.3" fill="#e84040"/><rect x="11" y="1.3" width="1.3" height="1.3" fill="#f0c040"/></svg>
<div class="a t" style="left:100.00px;top:185.22px;font-size:12px;line-height:14px;color:#000;font-weight:400;transform:scaleX(0.8624);transform-origin:0 0;">Dos_Elevador</div>
<svg class="a" style="left:81px;top:201px;" width="15" height="15" viewBox="0 0 15 15"><defs><linearGradient id="sg" x1="0" y1="0" x2="1" y2="1"><stop offset="0" stop-color="#fff"/><stop offset="1" stop-color="#dde2ea"/></linearGradient></defs><rect x="0.5" y="0.5" width="14" height="13" fill="url(#sg)" stroke="#6a7a9a"/><rect x="1" y="1" width="13" height="2" fill="#9ab8e8"/><rect x="9" y="1.3" width="1.3" height="1.3" fill="#e84040"/><rect x="11" y="1.3" width="1.3" height="1.3" fill="#f0c040"/></svg>
<div class="a t" style="left:100.00px;top:201.22px;font-size:12px;line-height:14px;color:#000;font-weight:400;transform:scaleX(0.8719);transform-origin:0 0;">Dos_Esteira</div>
<svg class="a" style="left:81px;top:217px;" width="15" height="15" viewBox="0 0 15 15"><defs><linearGradient id="sg" x1="0" y1="0" x2="1" y2="1"><stop offset="0" stop-color="#fff"/><stop offset="1" stop-color="#dde2ea"/></linearGradient></defs><rect x="0.5" y="0.5" width="14" height="13" fill="url(#sg)" stroke="#6a7a9a"/><rect x="1" y="1" width="13" height="2" fill="#9ab8e8"/><rect x="9" y="1.3" width="1.3" height="1.3" fill="#e84040"/><rect x="11" y="1.3" width="1.3" height="1.3" fill="#f0c040"/></svg>
<div class="a t" style="left:100.00px;top:217.22px;font-size:12px;line-height:14px;color:#000;font-weight:400;transform:scaleX(0.8573);transform-origin:0 0;">Dos_Valvula</div>
<svg class="a" style="left:81px;top:233px;" width="15" height="15" viewBox="0 0 15 15"><defs><linearGradient id="sg" x1="0" y1="0" x2="1" y2="1"><stop offset="0" stop-color="#fff"/><stop offset="1" stop-color="#dde2ea"/></linearGradient></defs><rect x="0.5" y="0.5" width="14" height="13" fill="url(#sg)" stroke="#6a7a9a"/><rect x="1" y="1" width="13" height="2" fill="#9ab8e8"/><rect x="9" y="1.3" width="1.3" height="1.3" fill="#e84040"/><rect x="11" y="1.3" width="1.3" height="1.3" fill="#f0c040"/></svg>
<div class="a t" style="left:100.00px;top:233.22px;font-size:12px;line-height:14px;color:#000;font-weight:400;transform:scaleX(0.8762);transform-origin:0 0;">Dosagem</div>
<svg class="a" style="left:81px;top:249px;" width="15" height="15" viewBox="0 0 15 15"><defs><linearGradient id="sg" x1="0" y1="0" x2="1" y2="1"><stop offset="0" stop-color="#fff"/><stop offset="1" stop-color="#dde2ea"/></linearGradient></defs><rect x="0.5" y="0.5" width="14" height="13" fill="url(#sg)" stroke="#6a7a9a"/><rect x="1" y="1" width="13" height="2" fill="#9ab8e8"/><rect x="9" y="1.3" width="1.3" height="1.3" fill="#e84040"/><rect x="11" y="1.3" width="1.3" height="1.3" fill="#f0c040"/></svg>
<div class="a t" style="left:100.00px;top:249.22px;font-size:12px;line-height:14px;color:#000;font-weight:400;transform:scaleX(0.8833);transform-origin:0 0;">Predial</div>
<svg class="a" style="left:81px;top:265px;" width="15" height="15" viewBox="0 0 15 15"><defs><linearGradient id="sg" x1="0" y1="0" x2="1" y2="1"><stop offset="0" stop-color="#fff"/><stop offset="1" stop-color="#dde2ea"/></linearGradient></defs><rect x="0.5" y="0.5" width="14" height="13" fill="url(#sg)" stroke="#6a7a9a"/><rect x="1" y="1" width="13" height="2" fill="#9ab8e8"/><rect x="9" y="1.3" width="1.3" height="1.3" fill="#e84040"/><rect x="11" y="1.3" width="1.3" height="1.3" fill="#f0c040"/></svg>
<div class="a t" style="left:100.00px;top:265.22px;font-size:12px;line-height:14px;color:#000;font-weight:400;transform:scaleX(0.9030);transform-origin:0 0;">predial_lu</div>
<svg class="a" style="left:81px;top:281px;" width="15" height="15" viewBox="0 0 15 15"><defs><linearGradient id="sg" x1="0" y1="0" x2="1" y2="1"><stop offset="0" stop-color="#fff"/><stop offset="1" stop-color="#dde2ea"/></linearGradient></defs><rect x="0.5" y="0.5" width="14" height="13" fill="url(#sg)" stroke="#6a7a9a"/><rect x="1" y="1" width="13" height="2" fill="#9ab8e8"/><rect x="9" y="1.3" width="1.3" height="1.3" fill="#e84040"/><rect x="11" y="1.3" width="1.3" height="1.3" fill="#f0c040"/></svg>
<div class="a t" style="left:100.00px;top:281.22px;font-size:12px;line-height:14px;color:#000;font-weight:400;transform:scaleX(0.8479);transform-origin:0 0;">San_Bomba</div>
<svg class="a" style="left:81px;top:297px;" width="15" height="15" viewBox="0 0 15 15"><defs><linearGradient id="sg" x1="0" y1="0" x2="1" y2="1"><stop offset="0" stop-color="#fff"/><stop offset="1" stop-color="#dde2ea"/></linearGradient></defs><rect x="0.5" y="0.5" width="14" height="13" fill="url(#sg)" stroke="#6a7a9a"/><rect x="1" y="1" width="13" height="2" fill="#9ab8e8"/><rect x="9" y="1.3" width="1.3" height="1.3" fill="#e84040"/><rect x="11" y="1.3" width="1.3" height="1.3" fill="#f0c040"/></svg>
<div class="a t" style="left:100.00px;top:297.22px;font-size:12px;line-height:14px;color:#000;font-weight:400;transform:scaleX(0.8957);transform-origin:0 0;">San_Filtro</div>
<svg class="a" style="left:81px;top:313px;" width="15" height="15" viewBox="0 0 15 15"><defs><linearGradient id="sg" x1="0" y1="0" x2="1" y2="1"><stop offset="0" stop-color="#fff"/><stop offset="1" stop-color="#dde2ea"/></linearGradient></defs><rect x="0.5" y="0.5" width="14" height="13" fill="url(#sg)" stroke="#6a7a9a"/><rect x="1" y="1" width="13" height="2" fill="#9ab8e8"/><rect x="9" y="1.3" width="1.3" height="1.3" fill="#e84040"/><rect x="11" y="1.3" width="1.3" height="1.3" fill="#f0c040"/></svg>
<div class="a t" style="left:100.00px;top:313.22px;font-size:12px;line-height:14px;color:#000;font-weight:400;transform:scaleX(0.8858);transform-origin:0 0;">San_Motor</div>
<svg class="a" style="left:81px;top:329px;" width="15" height="15" viewBox="0 0 15 15"><defs><linearGradient id="sg" x1="0" y1="0" x2="1" y2="1"><stop offset="0" stop-color="#fff"/><stop offset="1" stop-color="#dde2ea"/></linearGradient></defs><rect x="0.5" y="0.5" width="14" height="13" fill="url(#sg)" stroke="#6a7a9a"/><rect x="1" y="1" width="13" height="2" fill="#9ab8e8"/><rect x="9" y="1.3" width="1.3" height="1.3" fill="#e84040"/><rect x="11" y="1.3" width="1.3" height="1.3" fill="#f0c040"/></svg>
<svg class="a" style="left:65px;top:332px;" width="9" height="9" viewBox="0 0 9 9"><rect x="0.5" y="0.5" width="8" height="8" fill="#fafafa" stroke="#9a9aa4"/><path d="M2,4.5 h5" stroke="#2a3a70" stroke-width="1"/><path d="M4.5,2 v5" stroke="#2a3a70" stroke-width="1"/></svg>
<div class="a t" style="left:100.00px;top:329.22px;font-size:12px;line-height:14px;color:#000;font-weight:400;transform:scaleX(0.8815);transform-origin:0 0;">Saneamento</div>
<svg class="a" style="left:81px;top:345px;" width="15" height="15" viewBox="0 0 15 15"><defs><linearGradient id="sg" x1="0" y1="0" x2="1" y2="1"><stop offset="0" stop-color="#fff"/><stop offset="1" stop-color="#dde2ea"/></linearGradient></defs><rect x="0.5" y="0.5" width="14" height="13" fill="url(#sg)" stroke="#6a7a9a"/><rect x="1" y="1" width="13" height="2" fill="#9ab8e8"/><rect x="9" y="1.3" width="1.3" height="1.3" fill="#e84040"/><rect x="11" y="1.3" width="1.3" height="1.3" fill="#f0c040"/></svg>
<div class="a t" style="left:100.00px;top:345.22px;font-size:12px;line-height:14px;color:#000;font-weight:400;transform:scaleX(0.8831);transform-origin:0 0;">scrAlarmes</div>
<svg class="a" style="left:81px;top:361px;" width="15" height="15" viewBox="0 0 15 15"><defs><linearGradient id="sg" x1="0" y1="0" x2="1" y2="1"><stop offset="0" stop-color="#fff"/><stop offset="1" stop-color="#dde2ea"/></linearGradient></defs><rect x="0.5" y="0.5" width="14" height="13" fill="url(#sg)" stroke="#6a7a9a"/><rect x="1" y="1" width="13" height="2" fill="#9ab8e8"/><rect x="9" y="1.3" width="1.3" height="1.3" fill="#e84040"/><rect x="11" y="1.3" width="1.3" height="1.3" fill="#f0c040"/></svg>
<div class="a t" style="left:100.00px;top:361.22px;font-size:12px;line-height:14px;color:#000;font-weight:400;transform:scaleX(0.8719);transform-origin:0 0;">scrGeralCalendar</div>
<svg class="a" style="left:81px;top:377px;" width="15" height="15" viewBox="0 0 15 15"><defs><linearGradient id="sg" x1="0" y1="0" x2="1" y2="1"><stop offset="0" stop-color="#fff"/><stop offset="1" stop-color="#dde2ea"/></linearGradient></defs><rect x="0.5" y="0.5" width="14" height="13" fill="url(#sg)" stroke="#6a7a9a"/><rect x="1" y="1" width="13" height="2" fill="#9ab8e8"/><rect x="9" y="1.3" width="1.3" height="1.3" fill="#e84040"/><rect x="11" y="1.3" width="1.3" height="1.3" fill="#f0c040"/></svg>
<div class="a t" style="left:100.00px;top:377.22px;font-size:12px;line-height:14px;color:#000;font-weight:400;transform:scaleX(0.8748);transform-origin:0 0;">scrGeralList</div>
<svg class="a" style="left:81px;top:393px;" width="15" height="15" viewBox="0 0 15 15"><defs><linearGradient id="sg" x1="0" y1="0" x2="1" y2="1"><stop offset="0" stop-color="#fff"/><stop offset="1" stop-color="#dde2ea"/></linearGradient></defs><rect x="0.5" y="0.5" width="14" height="13" fill="url(#sg)" stroke="#6a7a9a"/><rect x="1" y="1" width="13" height="2" fill="#9ab8e8"/><rect x="9" y="1.3" width="1.3" height="1.3" fill="#e84040"/><rect x="11" y="1.3" width="1.3" height="1.3" fill="#f0c040"/></svg>
<div class="a t" style="left:100.00px;top:393.22px;font-size:12px;line-height:14px;color:#000;font-weight:400;transform:scaleX(0.9639);transform-origin:0 0;">scrInicial</div>
<svg class="a" style="left:81px;top:409px;" width="15" height="15" viewBox="0 0 15 15"><defs><linearGradient id="sg" x1="0" y1="0" x2="1" y2="1"><stop offset="0" stop-color="#fff"/><stop offset="1" stop-color="#dde2ea"/></linearGradient></defs><rect x="0.5" y="0.5" width="14" height="13" fill="url(#sg)" stroke="#6a7a9a"/><rect x="1" y="1" width="13" height="2" fill="#9ab8e8"/><rect x="9" y="1.3" width="1.3" height="1.3" fill="#e84040"/><rect x="11" y="1.3" width="1.3" height="1.3" fill="#f0c040"/></svg>
<div class="a t" style="left:100.00px;top:409.22px;font-size:12px;line-height:14px;color:#000;font-weight:400;transform:scaleX(0.9087);transform-origin:0 0;">scrMenuLeft</div>
<svg class="a" style="left:81px;top:425px;" width="15" height="15" viewBox="0 0 15 15"><defs><linearGradient id="sg" x1="0" y1="0" x2="1" y2="1"><stop offset="0" stop-color="#fff"/><stop offset="1" stop-color="#dde2ea"/></linearGradient></defs><rect x="0.5" y="0.5" width="14" height="13" fill="url(#sg)" stroke="#6a7a9a"/><rect x="1" y="1" width="13" height="2" fill="#9ab8e8"/><rect x="9" y="1.3" width="1.3" height="1.3" fill="#e84040"/><rect x="11" y="1.3" width="1.3" height="1.3" fill="#f0c040"/></svg>
<div class="a t" style="left:100.00px;top:425.22px;font-size:12px;line-height:14px;color:#000;font-weight:400;transform:scaleX(0.8872);transform-origin:0 0;">scrMenuTop</div>
<div class="a" style="left:3px;top:438px;width:180px;height:17px;background:#f0f0f0"></div>
<div class="a" style="left:21px;top:439px;width:131px;height:15px;background:#cdcdcd"></div>
<svg class="a" style="left:9px;top:442px;" width="5" height="8" viewBox="0 0 5 8"><path d="M4.5,0.5 L1,4 L4.5,7.5" fill="none" stroke="#5a5a5a" stroke-width="1.5"/></svg>
<svg class="a" style="left:171px;top:442px;" width="5" height="8" viewBox="0 0 5 8"><path d="M0.5,0.5 L4,4 L0.5,7.5" fill="none" stroke="#5a5a5a" stroke-width="1.5"/></svg>
<div class="a" style="left:1px;top:456px;width:200px;height:30px;background:#36455f"></div>
<div class="a" style="left:2px;top:456px;width:74px;height:22px;background:#fff;border:1px solid #9aa4b8;border-top:none"></div>
<svg class="a" style="left:5px;top:459px;" width="15" height="15" viewBox="0 0 15 15"><defs><linearGradient id="og" x1="0" y1="0" x2="1" y2="1"><stop offset="0" stop-color="#fff"/><stop offset="1" stop-color="#dde2ea"/></linearGradient></defs><rect x="0.5" y="0.5" width="13" height="12" fill="url(#og)" stroke="#5a6a9a"/><rect x="1" y="1" width="12" height="2" fill="#7aa0e0"/><path d="M7,4 v8 M7,8 h4" stroke="#888" stroke-width="1"/><path d="M7,1.5 l2.2,2.2 l-2.2,2.2 l-2.2,-2.2Z" fill="#f0c020" stroke="#a08010" stroke-width="0.5"/><path d="M12,5.5 l2.2,2.2 l-2.2,2.2 l-2.2,-2.2Z" fill="#f070e0" stroke="#a040a0" stroke-width="0.5"/><path d="M12,10.5 l2,2 l-2,2 l-2,-2Z" fill="#4a9ae8" stroke="#2a6ab0" stroke-width="0.5"/></svg>
<div class="a t" style="left:22.00px;top:460.22px;font-size:12px;line-height:14px;color:#000;font-weight:400;transform:scaleX(0.8731);transform-origin:0 0;">Organizer</div>
<svg class="a" style="left:81px;top:459px;" width="16" height="15" viewBox="0 0 16 15"><rect x="0.5" y="0.5" width="12" height="11" fill="#f4f6fa" stroke="#5a6a9a"/><rect x="1" y="1" width="11" height="2" fill="#5a8ae0"/><rect x="5" y="6" width="10" height="8" fill="#e8b830"/><path d="M8,10 l7,-4 v8Z" fill="#5ab030"/></svg>
<div class="a t" style="left:98.00px;top:460.22px;font-size:12px;line-height:14px;color:#fff;font-weight:400;transform:scaleX(0.8530);transform-origin:0 0;">Galeria</div>
<div class="a" style="left:1px;top:486px;width:200px;height:22px;background:linear-gradient(#4c5e83,#43557a)"></div>
<div class="a" style="left:1px;top:508px;width:200px;height:2px;background:#8a97ae"></div>
<div class="a t" style="left:5.00px;top:490.22px;font-size:12px;line-height:14px;color:#fff;font-weight:400;transform:scaleX(0.8946);transform-origin:0 0;">'Saneamento' (Panel.Scre...</div>
<svg class="a" style="left:148px;top:496px;" width="9" height="6" viewBox="0 0 9 6"><polygon points="0,0 9,0 4.5,5.5" fill="#dfe3ea"/></svg>
<svg class="a" style="left:168px;top:493px;" width="8" height="10" viewBox="0 0 8 10"><path d="M1.5,0.5 h5 v5.5 h-5Z M0,6.5 h8 M4,6.5 v3.5" fill="none" stroke="#e8ecf2" stroke-width="1.3"/></svg>
<svg class="a" style="left:186px;top:494px;" width="8" height="8" viewBox="0 0 8 8"><path d="M0,0 L8,8 M8,0 L0,8" stroke="#eef0f4" stroke-width="1.4"/></svg>
<div class="a" style="left:1px;top:508px;width:200px;height:29px;background:linear-gradient(#cdd5e3,#c3ccdb)"></div>
<svg class="a" style="left:10px;top:515px;" width="16" height="16" viewBox="0 0 16 16"><rect x="0.5" y="0.5" width="5" height="5" fill="#fff" stroke="#3a6ab0"/><path d="M1.5,3 h3 M3,1.5 v3" stroke="#000" stroke-width="0.8"/><rect x="0.5" y="9.5" width="5" height="5" fill="#fff" stroke="#3a6ab0"/><path d="M1.5,12 h3 M3,10.5 v3" stroke="#000" stroke-width="0.8"/><path d="M7,1 h8 M7,3.5 h8 M7,6 h8 M7,10 h8 M7,12.5 h8 M7,15 h8" stroke="#8a9a8a" stroke-width="0.8" stroke-dasharray="1.5,1"/></svg>
<div class="a" style="left:29px;top:512px;width:22px;height:22px;background:#fde9a6;border:1px solid #e2c26a"></div>
<svg class="a" style="left:33px;top:515px;" width="15" height="16" viewBox="0 0 15 16"><text x="0" y="8" font-family="Liberation Serif" font-size="9" font-weight="bold" fill="#2a4aa0">A</text><text x="0" y="15.5" font-family="Liberation Serif" font-size="9" font-weight="bold" fill="#8a2a2a">Z</text><path d="M11,1 v13 M8.5,11 L11,14.5 L13.5,11" fill="none" stroke="#000" stroke-width="1.1"/></svg>
<div class="a" style="left:58px;top:511px;width:139px;height:24px;background:#fff;border:1px solid #a9b4c6"></div>
<div class="a t" style="left:65.00px;top:516.22px;font-size:12px;line-height:14px;color:#6d6d6d;font-weight:400;transform:scaleX(0.8910);transform-origin:0 0;">Procurar</div>
<svg class="a" style="left:178px;top:515px;" width="15" height="15" viewBox="0 0 15 15"><circle cx="9" cy="5.5" r="4.3" fill="none" stroke="#3a7ad0" stroke-width="1.6"/><path d="M6,8.5 L1,13.5" stroke="#3a7ad0" stroke-width="2.2"/></svg>
<div class="a" style="left:1px;top:537px;width:200px;height:208px;background:#fff"></div>
<div class="a" style="left:102px;top:539px;width:1px;height:147px;background:#e8e8e8"></div>
<div class="a t" style="left:5.00px;top:543.22px;font-size:12px;line-height:14px;color:#000;font-weight:400;transform:scaleX(0.8870);transform-origin:0 0;">Propriedade</div>
<div class="a t" style="left:107.00px;top:543.22px;font-size:12px;line-height:14px;color:#000;font-weight:400;transform:scaleX(0.8848);transform-origin:0 0;">Valor</div>
<div class="a" style="left:3px;top:560px;width:16px;height:126px;background:#efefef"></div>
<div class="a" style="left:185px;top:560px;width:15px;height:126px;background:#f0f0f0"></div>
<div class="a" style="left:186px;top:577px;width:14px;height:29px;background:#cdcdcd"></div>
<svg class="a" style="left:189px;top:567px;" width="8" height="5" viewBox="0 0 8 5"><path d="M0.5,4.5 L4,1 L7.5,4.5" fill="none" stroke="#5a5a5a" stroke-width="1.5"/></svg>
<svg class="a" style="left:189px;top:675px;" width="8" height="5" viewBox="0 0 8 5"><path d="M0.5,0.5 L4,4 L7.5,0.5" fill="none" stroke="#5a5a5a" stroke-width="1.5"/></svg>
<svg class="a" style="left:21px;top:563px;" width="10" height="10" viewBox="0 0 10 10"><rect x="0" y="0" width="5" height="5" fill="#2ec02e"/><rect x="5" y="0" width="5" height="5" fill="#ee2a2a"/><rect x="0" y="5" width="5" height="5" fill="#f0d020"/><rect x="5" y="5" width="5" height="5" fill="#2a7ae0"/></svg>
<div class="a t" style="left:37.00px;top:561.22px;font-size:12px;line-height:14px;color:#000;font-weight:400;transform:scaleX(0.8533);transform-origin:0 0;">Backg...</div>
<svg class="a" style="left:88px;top:563px;" width="11" height="11" viewBox="0 0 11 11"><path d="M0.5,0.5 h9 v5 M0.5,0.5 v9 h5" fill="none" stroke="#555" stroke-width="1"/><path d="M10,7 L7,10" stroke="#555" stroke-width="1.5"/></svg>
<div class="a t" style="left:123.00px;top:561.22px;font-size:12px;line-height:14px;color:#000;font-weight:400;transform:scaleX(0.9264);transform-origin:0 0;">240, ...</div>
<div class="a" style="left:104px;top:561px;width:14px;height:14px;background:#f0f0f0;border:1px solid #888"></div>
<div class="a" style="left:167px;top:561px;width:16px;height:14px;background:#f0f0f0;border:1px solid #888"></div>
<div class="a t" style="left:169.99px;top:562.22px;font-size:12px;line-height:14px;color:#000;font-weight:400;">...</div>
<div class="a" style="left:34px;top:576px;width:151px;height:1px;background:#ececec"></div>
<svg class="a" style="left:21px;top:580px;" width="10" height="11" viewBox="0 0 10 11"><path d="M1,10.5 L5,0.5 L9,10.5 M2.5,7 h5" fill="none" stroke="#f040e0" stroke-width="1.5"/></svg>
<div class="a t" style="left:37.00px;top:578.22px;font-size:12px;line-height:14px;color:#000;font-weight:400;transform:scaleX(0.8943);transform-origin:0 0;">Caption</div>
<svg class="a" style="left:87px;top:579px;" width="13" height="13" viewBox="0 0 13 13"><path d="M6.5,0.5 L12.5,6.5 L6.5,12.5 L0.5,6.5Z" fill="#fff" stroke="#666" stroke-width="0.8"/><path d="M6.5,2.5 L10.5,6.5 L6.5,10.5 L2.5,6.5Z" fill="#000"/></svg>
<div class="a t" style="left:106.00px;top:578.22px;font-size:12px;line-height:14px;color:#000;font-weight:700;transform:scaleX(1.0293);transform-origin:0 0;">Water Trea...</div>
<div class="a" style="left:34px;top:593px;width:151px;height:1px;background:#ececec"></div>
<svg class="a" style="left:21px;top:597px;" width="10" height="11" viewBox="0 0 10 11"><path d="M1,10.5 L5,0.5 L9,10.5 M2.5,7 h5" fill="none" stroke="#f040e0" stroke-width="1.5"/></svg>
<div class="a t" style="left:37.00px;top:595.22px;font-size:12px;line-height:14px;color:#000;font-weight:400;transform:scaleX(0.8668);transform-origin:0 0;">DocSt...</div>
<svg class="a" style="left:88px;top:597px;" width="11" height="11" viewBox="0 0 11 11"><path d="M0.5,0.5 h9 v5 M0.5,0.5 v9 h5" fill="none" stroke="#555" stroke-width="1"/><path d="M10,7 L7,10" stroke="#555" stroke-width="1.5"/></svg>
<div class="a" style="left:34px;top:610px;width:151px;height:1px;background:#ececec"></div>
<svg class="a" style="left:19px;top:614px;" width="13" height="10" viewBox="0 0 13 10"><rect x="0.5" y="3.5" width="8" height="5" rx="1" fill="#f0d070" stroke="#9a7a20" stroke-width="0.8"/><rect x="4.5" y="0.5" width="8" height="5" rx="1" fill="#f0d070" stroke="#9a7a20" stroke-width="0.8"/></svg>
<div class="a t" style="left:37.00px;top:612.22px;font-size:12px;line-height:14px;color:#000;font-weight:400;transform:scaleX(0.8806);transform-origin:0 0;">FillStyle</div>
<svg class="a" style="left:88px;top:614px;" width="11" height="11" viewBox="0 0 11 11"><path d="M0.5,0.5 h9 v5 M0.5,0.5 v9 h5" fill="none" stroke="#555" stroke-width="1"/><path d="M10,7 L7,10" stroke="#555" stroke-width="1.5"/></svg>
<div class="a t" style="left:106.00px;top:612.22px;font-size:12px;line-height:14px;color:#000;font-weight:400;transform:scaleX(0.8970);transform-origin:0 0;">11 - bkBackg...</div>
<div class="a" style="left:34px;top:627px;width:151px;height:1px;background:#ececec"></div>
<svg class="a" style="left:21px;top:631px;" width="10" height="10" viewBox="0 0 10 10"><rect x="0" y="0" width="5" height="5" fill="#2ec02e"/><rect x="5" y="0" width="5" height="5" fill="#ee2a2a"/><rect x="0" y="5" width="5" height="5" fill="#f0d020"/><rect x="5" y="5" width="5" height="5" fill="#2a7ae0"/></svg>
<div class="a t" style="left:37.00px;top:629.22px;font-size:12px;line-height:14px;color:#000;font-weight:400;transform:scaleX(0.8946);transform-origin:0 0;">Foreg...</div>
<svg class="a" style="left:88px;top:631px;" width="11" height="11" viewBox="0 0 11 11"><path d="M0.5,0.5 h9 v5 M0.5,0.5 v9 h5" fill="none" stroke="#555" stroke-width="1"/><path d="M10,7 L7,10" stroke="#555" stroke-width="1.5"/></svg>
<div class="a t" style="left:123.00px;top:629.22px;font-size:12px;line-height:14px;color:#000;font-weight:400;transform:scaleX(1.0192);transform-origin:0 0;">0, 0, 0</div>
<div class="a" style="left:104px;top:629px;width:14px;height:14px;background:#000;border:1px solid #888"></div>
<div class="a" style="left:167px;top:629px;width:16px;height:14px;background:#f0f0f0;border:1px solid #888"></div>
<div class="a t" style="left:169.99px;top:630.22px;font-size:12px;line-height:14px;color:#000;font-weight:400;">...</div>
<div class="a" style="left:34px;top:644px;width:151px;height:1px;background:#ececec"></div>
<svg class="a" style="left:19px;top:648px;" width="13" height="10" viewBox="0 0 13 10"><rect x="0.5" y="3.5" width="8" height="5" rx="1" fill="#f0d070" stroke="#9a7a20" stroke-width="0.8"/><rect x="4.5" y="0.5" width="8" height="5" rx="1" fill="#f0d070" stroke="#9a7a20" stroke-width="0.8"/></svg>
<div class="a t" style="left:37.00px;top:646.22px;font-size:12px;line-height:14px;color:#000;font-weight:400;transform:scaleX(0.8384);transform-origin:0 0;">Gradi...</div>
<svg class="a" style="left:88px;top:648px;" width="11" height="11" viewBox="0 0 11 11"><path d="M0.5,0.5 h9 v5 M0.5,0.5 v9 h5" fill="none" stroke="#555" stroke-width="1"/><path d="M10,7 L7,10" stroke="#555" stroke-width="1.5"/></svg>
<div class="a t" style="left:106.00px;top:646.22px;font-size:12px;line-height:14px;color:#000;font-weight:400;transform:scaleX(0.8969);transform-origin:0 0;">0 - LeftToRight</div>
<div class="a" style="left:34px;top:661px;width:151px;height:1px;background:#ececec"></div>
<svg class="a" style="left:22px;top:663px;" width="9" height="13" viewBox="0 0 9 13"><text x="0" y="11" font-family="Liberation Sans" font-size="13" font-weight="bold" fill="#4a5ae8" transform="scale(0.95,1.1)">9</text></svg>
<div class="a t" style="left:37.00px;top:663.22px;font-size:12px;line-height:14px;color:#000;font-weight:400;transform:scaleX(0.9225);transform-origin:0 0;">Height</div>
<svg class="a" style="left:87px;top:664px;" width="13" height="13" viewBox="0 0 13 13"><path d="M6.5,0.5 L12.5,6.5 L6.5,12.5 L0.5,6.5Z" fill="#fff" stroke="#666" stroke-width="0.8"/><path d="M6.5,2.5 L10.5,6.5 L6.5,10.5 L2.5,6.5Z" fill="#000"/></svg>
<div class="a t" style="left:106.00px;top:663.22px;font-size:12px;line-height:14px;color:#000;font-weight:700;transform:scaleX(1.0487);transform-origin:0 0;">25000</div>
<div class="a" style="left:34px;top:678px;width:151px;height:1px;background:#ececec"></div>
<svg class="a" style="left:22px;top:680px;" width="9" height="13" viewBox="0 0 9 13"><text x="0" y="11" font-family="Liberation Sans" font-size="13" font-weight="bold" fill="#4a5ae8" transform="scale(0.95,1.1)">9</text></svg>
<div class="a t" style="left:37.00px;top:680.22px;font-size:12px;line-height:14px;color:#000;font-weight:400;transform:scaleX(0.9324);transform-origin:0 0;">Layer</div>
<svg class="a" style="left:88px;top:682px;" width="11" height="11" viewBox="0 0 11 11"><path d="M0.5,0.5 h9 v5 M0.5,0.5 v9 h5" fill="none" stroke="#555" stroke-width="1"/><path d="M10,7 L7,10" stroke="#555" stroke-width="1.5"/></svg>
<div class="a t" style="left:106.00px;top:680.22px;font-size:12px;line-height:14px;color:#000;font-weight:400;transform:scaleX(1.0300);transform-origin:0 0;">&amp;h1</div>
<div class="a" style="left:1px;top:686px;width:200px;height:59px;background:#f0f0f0"></div>
<div class="a" style="left:1px;top:690px;width:200px;height:1px;background:#a0a0a0"></div>
<div class="a" style="left:1px;top:744px;width:200px;height:1px;background:#fff"></div>
<div class="a" style="left:212px;top:113px;width:110px;height:27px;background:linear-gradient(#fbfcfe 0%,#eef1f8 40%,#d5dbec 45%,#d5dbec 100%);border-radius:2px 2px 0 0"></div>
<div class="a" style="left:212px;top:136px;width:806px;height:4px;background:#d5dbec;border-radius:0 2px 0 0"></div>
<svg class="a" style="left:217px;top:118px;" width="14" height="13" viewBox="0 0 14 13"><defs><linearGradient id="tg" x1="0" y1="0" x2="1" y2="1"><stop offset="0" stop-color="#fff"/><stop offset="1" stop-color="#dde2ea"/></linearGradient></defs><rect x="0.5" y="0.5" width="13" height="12" fill="url(#tg)" stroke="#4a5a7a"/><rect x="1" y="1" width="12" height="2" fill="#8ab0e8"/><rect x="8" y="1.3" width="1.3" height="1.3" fill="#f0c040"/><rect x="10" y="1.3" width="1.3" height="1.3" fill="#e84040"/></svg>
<div class="a t" style="left:233.00px;top:118.22px;font-size:12px;line-height:14px;color:#000;font-weight:400;transform:scaleX(0.8815);transform-origin:0 0;">Saneamento</div>
<svg class="a" style="left:307px;top:121px;" width="8" height="8" viewBox="0 0 8 8"><path d="M0,0 L8,8 M8,0 L0,8" stroke="#000" stroke-width="1.4"/></svg>
<svg class="a" style="left:988px;top:119px;" width="6" height="10" viewBox="0 0 6 10"><path d="M5.5,0.5 L0.8,5 L5.5,9.5Z" fill="none" stroke="#e0e4ec" stroke-width="1"/></svg>
<svg class="a" style="left:1006px;top:119px;" width="6" height="10" viewBox="0 0 6 10"><path d="M0.5,0.5 L5.2,5 L0.5,9.5Z" fill="none" stroke="#e0e4ec" stroke-width="1"/></svg>
<div class="a" style="left:212px;top:140px;width:806px;height:604px;background:#f0f0f0"></div>
<div class="a" style="left:212px;top:140px;width:1px;height:581px;background:#a0a0a0"></div>
<div class="a" style="left:213px;top:140px;width:786px;height:8px;background:#808080"></div>
<div class="a" style="left:213px;top:140px;width:786px;height:1px;background:#8c8c8c"></div>
<div class="a" style="left:213px;top:148px;width:786px;height:1px;background:#a8a8a8"></div>
<div class="a" style="left:213px;top:148px;width:8px;height:556px;background:#808080"></div>
<div class="a" style="left:219px;top:148px;width:1px;height:556px;background:#a8a8a8"></div>
<div class="a" style="left:220px;top:149px;width:779px;height:555px;background:#f0f0f0"></div>
<div class="a" style="left:220px;top:149px;width:1px;height:555px;background:#8a8a8a"></div>
<div class="a" style="left:218px;top:146px;width:7px;height:7px;background:#fff"></div>
<div class="a" style="left:219px;top:147px;width:5px;height:5px;background:#2e5cff"></div>
<div class="a" style="left:218px;top:618px;width:7px;height:7px;background:#fff"></div>
<div class="a" style="left:219px;top:619px;width:5px;height:5px;background:#2e5cff"></div>
<div class="a" style="left:999px;top:140px;width:1px;height:564px;background:#fff"></div>
<div class="a" style="left:1000px;top:140px;width:17px;height:564px;background:#f0f0f0"></div>
<div class="a" style="left:1017px;top:140px;width:1px;height:604px;background:#fafafa"></div>
<div class="a" style="left:1000px;top:287px;width:15px;height:87px;background:#cdcdcd"></div>
<svg class="a" style="left:1004px;top:148px;" width="8" height="6" viewBox="0 0 8 6"><path d="M0.8,5.2 L4,1.5 L7.2,5.2" fill="none" stroke="#505050" stroke-width="1.7"/></svg>
<svg class="a" style="left:1004px;top:693px;" width="8" height="6" viewBox="0 0 8 6"><path d="M0.8,0.8 L4,4.8 L7.2,0.8" fill="none" stroke="#505050" stroke-width="2"/></svg>
<div class="a" style="left:213px;top:704px;width:787px;height:1px;background:#fff"></div>
<div class="a" style="left:213px;top:705px;width:804px;height:16px;background:#f0f0f0"></div>
<div class="a" style="left:365px;top:705px;width:90px;height:15px;background:#cdcdcd"></div>
<svg class="a" style="left:219px;top:708px;" width="6" height="9" viewBox="0 0 6 9"><path d="M5,0.8 L1.3,4.5 L5,8.2" fill="none" stroke="#505050" stroke-width="1.7"/></svg>
<svg class="a" style="left:987px;top:708px;" width="6" height="9" viewBox="0 0 6 9"><path d="M1,0.8 L4.7,4.5 L1,8.2" fill="none" stroke="#505050" stroke-width="1.7"/></svg>
<div class="a" style="left:213px;top:721px;width:804px;height:1px;background:#6a6a6a"></div>
<div class="a" style="left:213px;top:722px;width:804px;height:16px;background:#f0f0f0"></div>
<div class="a" style="left:213px;top:738px;width:804px;height:1px;background:#dcdcdc"></div>
<div class="a" style="left:212px;top:739px;width:806px;height:5px;background:#d5dbec"></div>
<div class="a" style="left:213px;top:739px;width:804px;height:1px;background:#fff"></div>
<svg class="a" style="left:216px;top:726px;" width="58" height="9" viewBox="0 0 58 9"><path d="M1,1 v7" stroke="#c8cfdc" stroke-width="1.3"/><path d="M7.5,1 L2.5,4.5 L7.5,8Z M22,1 L17.5,4.5 L22,8Z M34.5,1 L39,4.5 L34.5,8Z M50,1 L55,4.5 L50,8Z" fill="#c8cfdc"/><path d="M56,1 v7" stroke="#c8cfdc" stroke-width="1.3"/></svg>
<svg class="a" style="left:274px;top:721px;" width="118" height="18" viewBox="0 0 118 18"><path d="M63.5,0.5 L56,16.5 L107,16.5 L115,0.5" fill="#f0f0f0" stroke="#555" stroke-width="1"/><path d="M4.5,0.5 L12.5,16.5 L55.5,16.5 L62.5,0.5" fill="#fff" stroke="#555" stroke-width="1"/><path d="M5,0.5 L62,0.5" stroke="#fff" stroke-width="1.2"/></svg>
<div class="a t" style="left:288.00px;top:722.72px;font-size:12px;line-height:14px;color:#000;font-weight:700;transform:scaleX(0.9496);transform-origin:0 0;">Design</div>
<div class="a t" style="left:343.00px;top:722.72px;font-size:12px;line-height:14px;color:#000;font-weight:400;transform:scaleX(0.8722);transform-origin:0 0;">Scripts</div>
<svg class="a" style="left:0;top:0" width="1024" height="768" viewBox="0 0 1024 768"><path d="M357,332 H403" stroke="#808080" stroke-width="1.6"/><path d="M403,294.2 V372.2" stroke="#808080" stroke-width="2"/><path d="M403,295 H432" stroke="#808080" stroke-width="1.6"/><path d="M403,371.5 H432" stroke="#808080" stroke-width="1.6"/><circle cx="452.7" cy="296" r="20.3" fill="#808080"/><rect x="452.7" y="274.8" width="33.3" height="14.8" fill="#808080"/><polygon points="432,320 474,320 461,308 444,308" fill="#808080"/><circle cx="452.7" cy="372" r="20.3" fill="#808080"/><rect x="452.7" y="350.8" width="33.3" height="14.8" fill="#808080"/><polygon points="432,396 474,396 461,384 444,384" fill="#808080"/><path d="M486,281.6 H589" stroke="#808080" stroke-width="1.6"/><path d="M486,357.4 H589" stroke="#808080" stroke-width="1.6"/><path d="M589,280.3 V588.5" stroke="#808080" stroke-width="2"/><path d="M357,561.6 H403" stroke="#808080" stroke-width="1.6"/><path d="M403,524.2 V601.2" stroke="#808080" stroke-width="2"/><path d="M403,525 H432" stroke="#808080" stroke-width="1.6"/><path d="M403,600.5 H432" stroke="#808080" stroke-width="1.6"/><circle cx="452.7" cy="526" r="20.3" fill="#808080"/><rect x="452.7" y="504.8" width="33.3" height="14.8" fill="#808080"/><polygon points="432,550 474,550 461,538 444,538" fill="#808080"/><circle cx="452.7" cy="601.5" r="20.3" fill="#808080"/><rect x="452.7" y="580.3" width="33.3" height="14.8" fill="#808080"/><polygon points="432,625.5 474,625.5 461,613.5 444,613.5" fill="#808080"/><path d="M486,512.5 H589" stroke="#808080" stroke-width="1.6"/><path d="M486,587.7 H589" stroke="#808080" stroke-width="1.6"/><path d="M589,437.2 H697" stroke="#808080" stroke-width="1.6"/><polygon points="695,426.5 707,437.2 695,448.5" fill="#808080"/><path d="M879,536.8 H999" stroke="#808080" stroke-width="1.5"/><path d="M606,695.8 H999" stroke="#808080" stroke-width="2"/><polygon points="594.5,695.8 607,687 607,704.5" fill="#808080"/><rect x="339" y="306" width="18" height="20" fill="#ff0000"/><rect x="339" y="326" width="18" height="41" fill="#a8a8a8"/><rect x="339" y="367" width="18" height="40" fill="#ff0000"/><rect x="339" y="535" width="18" height="20" fill="#ff0000"/><rect x="339" y="555" width="18" height="41" fill="#a8a8a8"/><rect x="339" y="596" width="18" height="40" fill="#ff0000"/></svg>
<svg class="a" style="left:715px;top:340px" width="215" height="165" viewBox="0 0 971 745"><polygon points="32,452 285,310 420,278 490,240 530,170 765,35 785,45 785,75 895,135 925,125 945,137 945,310 700,450 575,475 505,515 450,595 215,730 32,625" fill="#cfd1d4"/><polygon points="58,495 300,345 420,320 490,290 545,205 785,75 895,135 690,262 560,290 490,330 440,405 195,545 195,572" fill="#c8dce8"/><polygon points="55,468 300,330 425,295 500,255 540,185 785,45 785,75 545,205 490,290 420,320 300,345 58,495" fill="#bcc1c8"/><polygon points="32,452 285,310 420,278 490,240 530,170 765,35 785,45 540,185 500,255 425,295 300,330 55,468" fill="#dcdcdc"/><polygon points="58,495 195,572 195,690 58,610" fill="#b9d1e0"/><polygon points="215,550 450,420 500,340 570,305 695,280 945,137 945,310 700,450 575,475 505,515 450,595 215,730" fill="#bcc1c7"/><polygon points="195,545 440,405 490,330 560,290 690,262 925,125 945,137 695,280 570,305 500,340 450,420 215,550" fill="#dcdcdc"/><polygon points="195,545 215,550 215,730 195,690" fill="#d2d4d7"/><polygon points="32,452 58,468 58,610 32,625" fill="#d2d4d7"/><polygon points="32,625 58,610 195,690 215,730" fill="#c8cacd"/><path d="M450,420 V595 M500,340 V515 M570,305 V475 M695,280 V450" stroke="#d4d7da" stroke-width="4"/></svg>
<div class="a t" style="left:333.00px;top:247.37px;font-size:15px;line-height:17px;color:#808080;font-weight:400;transform:scaleX(0.9417);transform-origin:0 0;">PAC</div>
<div class="a t" style="left:309.00px;top:474.07px;font-size:15px;line-height:17px;color:#808080;font-weight:400;transform:scaleX(1.0723);transform-origin:0 0;">Hipoclorito</div>
<div class="a t" style="left:308.50px;top:299.72px;font-size:12px;line-height:14px;color:#888;font-weight:400;transform:scaleX(0.8487);transform-origin:0 0;">100</div>
<div class="a t" style="left:319.00px;top:309.62px;font-size:12px;line-height:14px;color:#ffb400;font-weight:400;transform:scaleX(0.9720);transform-origin:0 0;">3</div>
<div class="a t" style="left:322.40px;top:309.62px;font-size:12px;line-height:14px;color:#ff1010;font-weight:400;transform:scaleX(0.3888);transform-origin:0 0;opacity:0.75;">1</div>
<div class="a t" style="left:289.00px;top:309.62px;font-size:12px;line-height:14px;color:#ffb400;font-weight:400;transform:scaleX(0.9781);transform-origin:0 0;">HiHiS</div>
<div class="a t" style="left:319.00px;top:319.62px;font-size:12px;line-height:14px;color:#ffb400;font-weight:400;transform:scaleX(0.9720);transform-origin:0 0;">3</div>
<div class="a t" style="left:322.40px;top:319.62px;font-size:12px;line-height:14px;color:#ff1010;font-weight:400;transform:scaleX(0.3888);transform-origin:0 0;opacity:0.75;">1</div>
<div class="a t" style="left:301.00px;top:319.62px;font-size:12px;line-height:14px;color:#ffb400;font-weight:400;transform:scaleX(0.9305);transform-origin:0 0;">HiS</div>
<div class="a t" style="left:319.00px;top:359.72px;font-size:12px;line-height:14px;color:#ffd000;font-weight:400;transform:scaleX(0.9720);transform-origin:0 0;">3</div>
<div class="a t" style="left:320.50px;top:359.72px;font-size:12px;line-height:14px;color:#ff0000;font-weight:400;transform:scaleX(0.6729);transform-origin:0 0;">1</div>
<div class="a t" style="left:298.00px;top:359.72px;font-size:12px;line-height:14px;color:#ff0000;font-weight:400;transform:scaleX(0.9832);transform-origin:0 0;">LoS</div>
<div class="a t" style="left:319.00px;top:379.72px;font-size:12px;line-height:14px;color:#ffd000;font-weight:400;transform:scaleX(0.9720);transform-origin:0 0;">3</div>
<div class="a t" style="left:320.50px;top:379.72px;font-size:12px;line-height:14px;color:#ff0000;font-weight:400;transform:scaleX(0.6729);transform-origin:0 0;">1</div>
<div class="a t" style="left:286.00px;top:379.72px;font-size:12px;line-height:14px;color:#ff0000;font-weight:400;transform:scaleX(0.9509);transform-origin:0 0;">LoLoS</div>
<div class="a t" style="left:319.50px;top:399.52px;font-size:12px;line-height:14px;color:#888;font-weight:400;transform:scaleX(0.8972);transform-origin:0 0;">0</div>
<div class="a t" style="left:308.50px;top:528.22px;font-size:12px;line-height:14px;color:#888;font-weight:400;transform:scaleX(0.8487);transform-origin:0 0;">100</div>
<div class="a t" style="left:319.00px;top:538.52px;font-size:12px;line-height:14px;color:#ffb400;font-weight:400;transform:scaleX(0.9720);transform-origin:0 0;">3</div>
<div class="a t" style="left:322.40px;top:538.52px;font-size:12px;line-height:14px;color:#ff1010;font-weight:400;transform:scaleX(0.3888);transform-origin:0 0;opacity:0.75;">1</div>
<div class="a t" style="left:289.00px;top:538.52px;font-size:12px;line-height:14px;color:#ffb400;font-weight:400;transform:scaleX(0.9781);transform-origin:0 0;">HiHiS</div>
<div class="a t" style="left:319.00px;top:549.02px;font-size:12px;line-height:14px;color:#ffb400;font-weight:400;transform:scaleX(0.9720);transform-origin:0 0;">3</div>
<div class="a t" style="left:322.40px;top:549.02px;font-size:12px;line-height:14px;color:#ff1010;font-weight:400;transform:scaleX(0.3888);transform-origin:0 0;opacity:0.75;">1</div>
<div class="a t" style="left:301.00px;top:549.02px;font-size:12px;line-height:14px;color:#ffb400;font-weight:400;transform:scaleX(0.9305);transform-origin:0 0;">HiS</div>
<div class="a t" style="left:319.00px;top:588.02px;font-size:12px;line-height:14px;color:#ffd000;font-weight:400;transform:scaleX(0.9720);transform-origin:0 0;">3</div>
<div class="a t" style="left:320.50px;top:588.02px;font-size:12px;line-height:14px;color:#ff0000;font-weight:400;transform:scaleX(0.6729);transform-origin:0 0;">1</div>
<div class="a t" style="left:298.00px;top:588.02px;font-size:12px;line-height:14px;color:#ff0000;font-weight:400;transform:scaleX(0.9832);transform-origin:0 0;">LoS</div>
<div class="a t" style="left:319.00px;top:608.02px;font-size:12px;line-height:14px;color:#ffd000;font-weight:400;transform:scaleX(0.9720);transform-origin:0 0;">3</div>
<div class="a t" style="left:320.50px;top:608.02px;font-size:12px;line-height:14px;color:#ff0000;font-weight:400;transform:scaleX(0.6729);transform-origin:0 0;">1</div>
<div class="a t" style="left:286.00px;top:608.02px;font-size:12px;line-height:14px;color:#ff0000;font-weight:400;transform:scaleX(0.9509);transform-origin:0 0;">LoLoS</div>
<div class="a t" style="left:319.50px;top:627.62px;font-size:12px;line-height:14px;color:#888;font-weight:400;transform:scaleX(0.8972);transform-origin:0 0;">0</div>
<div class="a t" style="left:323.00px;top:418.27px;font-size:15px;line-height:17px;color:#808080;font-weight:400;transform:scaleX(0.9487);transform-origin:0 0;">LT-1-01</div>
<div class="a t" style="left:328.30px;top:435.12px;font-size:18px;line-height:21px;color:#808080;font-weight:400;transform:scaleX(0.9822);transform-origin:0 0;">00 %</div>
<div class="a t" style="left:322.00px;top:647.27px;font-size:15px;line-height:17px;color:#808080;font-weight:400;transform:scaleX(0.9784);transform-origin:0 0;">LT-1-02</div>
<div class="a t" style="left:328.30px;top:663.62px;font-size:18px;line-height:21px;color:#808080;font-weight:400;transform:scaleX(0.9822);transform-origin:0 0;">00 %</div>
<div class="a t" style="left:516.60px;top:258.23px;font-size:13px;line-height:15px;color:#808080;font-weight:400;transform:scaleX(0.9293);transform-origin:0 0;">BD-1-01</div>
<div class="a t" style="left:515.00px;top:287.32px;font-size:18px;line-height:21px;color:#808080;font-weight:400;transform:scaleX(0.9685);transform-origin:0 0;">00</div>
<div class="a t" style="left:544.50px;top:290.23px;font-size:13px;line-height:15px;color:#999;font-weight:400;transform:scaleX(0.9514);transform-origin:0 0;">L/h</div>
<div class="a t" style="left:516.60px;top:333.73px;font-size:13px;line-height:15px;color:#808080;font-weight:400;transform:scaleX(0.9293);transform-origin:0 0;">BD-1-02</div>
<div class="a t" style="left:515.00px;top:363.82px;font-size:18px;line-height:21px;color:#808080;font-weight:400;transform:scaleX(0.9685);transform-origin:0 0;">00</div>
<div class="a t" style="left:544.50px;top:366.73px;font-size:13px;line-height:15px;color:#999;font-weight:400;transform:scaleX(0.9514);transform-origin:0 0;">L/h</div>
<div class="a t" style="left:516.60px;top:488.33px;font-size:13px;line-height:15px;color:#808080;font-weight:400;transform:scaleX(0.9293);transform-origin:0 0;">BD-1-03</div>
<div class="a t" style="left:515.00px;top:517.52px;font-size:18px;line-height:21px;color:#808080;font-weight:400;transform:scaleX(0.9685);transform-origin:0 0;">00</div>
<div class="a t" style="left:544.50px;top:520.43px;font-size:13px;line-height:15px;color:#999;font-weight:400;transform:scaleX(0.9514);transform-origin:0 0;">L/h</div>
<div class="a t" style="left:516.60px;top:563.73px;font-size:13px;line-height:15px;color:#808080;font-weight:400;transform:scaleX(0.9293);transform-origin:0 0;">BD-1-04</div>
<div class="a t" style="left:515.00px;top:594.42px;font-size:18px;line-height:21px;color:#808080;font-weight:400;transform:scaleX(0.9685);transform-origin:0 0;">00</div>
<div class="a t" style="left:544.50px;top:597.33px;font-size:13px;line-height:15px;color:#999;font-weight:400;transform:scaleX(0.9514);transform-origin:0 0;">L/h</div>
<div class="a t" style="left:627.20px;top:412.33px;font-size:13px;line-height:15px;color:#808080;font-weight:400;transform:scaleX(0.9447);transform-origin:0 0;">FT-1-01</div>
<div class="a t" style="left:625.50px;top:445.32px;font-size:18px;line-height:21px;color:#808080;font-weight:400;transform:scaleX(0.9385);transform-origin:0 0;">00</div>
<div class="a t" style="left:654.50px;top:448.23px;font-size:13px;line-height:15px;color:#999;font-weight:400;transform:scaleX(0.9225);transform-origin:0 0;">L/s</div>
<div class="a t" style="left:764.30px;top:528.24px;font-size:13.5px;line-height:16px;color:#808080;font-weight:400;transform:scaleX(0.9692);transform-origin:0 0;">Mistura Rápida</div>
<div class="a t" style="left:495.00px;top:688.13px;font-size:13px;line-height:15px;color:#808080;font-weight:400;transform:scaleX(0.9514);transform-origin:0 0;">Reservação</div>
<div class="a" style="left:1px;top:745px;width:1022px;height:22px;background:#293955"></div>
<div class="a" style="left:1px;top:745px;width:1022px;height:1px;background:#1e2a44"></div>
<div class="a" style="left:0px;top:767px;width:1024px;height:1px;background:#5a5a5a"></div>
<div class="a t" style="left:5.00px;top:750.22px;font-size:12px;line-height:14px;color:#fff;font-weight:400;transform:scaleX(0.8980);transform-origin:0 0;">Para Ajuda, pressione F1</div>
<svg class="a" style="left:377px;top:750px;" width="9" height="14" viewBox="0 0 9 14"><path d="M1,0.5 L1,11 L3.5,8.5 L6,13.5 L8,12.5 L5.5,7.5 L8.8,7.5Z" fill="#111" stroke="#666" stroke-width="0.6"/></svg>
<div class="a t" style="left:394.00px;top:750.22px;font-size:12px;line-height:14px;color:#fff;font-weight:400;transform:scaleX(0.9107);transform-origin:0 0;">11139, 53</div>
<div class="a" style="left:514px;top:748px;width:1px;height:17px;background:#dfe3ea"></div>
<svg class="a" style="left:520px;top:749px;" width="13" height="13" viewBox="0 0 13 13"><path d="M0,4 h5 M4,0 v5" stroke="#3a8aff" stroke-width="1.3"/><rect x="5" y="5" width="7" height="7" fill="#c8c8c8" stroke="#888" stroke-width="0.5" stroke-dasharray="1,1"/></svg>
<div class="a t" style="left:539.00px;top:750.22px;font-size:12px;line-height:14px;color:#fff;font-weight:400;transform:scaleX(0.8993);transform-origin:0 0;">0, 0</div>
<div class="a" style="left:660px;top:748px;width:1px;height:17px;background:#dfe3ea"></div>
<svg class="a" style="left:666px;top:749px;" width="14" height="15" viewBox="0 0 14 15"><path d="M8,2 h5 M11,0 l2,2 l-2,2 M2,9 v5 M0,12 l2,2 l2,-2" fill="none" stroke="#3a8aff" stroke-width="1.2"/><rect x="6" y="6" width="7" height="8" fill="#c8c8c8"/><path d="M5,1 v4 M1,8 h4" stroke="#888" stroke-width="0.8" stroke-dasharray="1,1"/></svg>
<div class="a t" style="left:685.00px;top:750.22px;font-size:12px;line-height:14px;color:#fff;font-weight:400;transform:scaleX(0.8990);transform-origin:0 0;">50377,25000</div>
<div class="a" style="left:806px;top:748px;width:1px;height:17px;background:#dfe3ea"></div>
<div class="a t" style="left:812.00px;top:750.22px;font-size:12px;line-height:14px;color:#fff;font-weight:400;transform:scaleX(0.8794);transform-origin:0 0;">100%</div>
<div class="a" style="left:932px;top:748px;width:1px;height:17px;background:#dfe3ea"></div>
<div class="a" style="left:958px;top:748px;width:1px;height:17px;background:#dfe3ea"></div>
<div class="a" style="left:986px;top:748px;width:1px;height:17px;background:#dfe3ea"></div>
<div class="a" style="left:1004px;top:748px;width:1px;height:17px;background:#dfe3ea"></div>
<div class="a t" style="left:936.50px;top:750.22px;font-size:12px;line-height:14px;color:#6f7b90;font-weight:400;transform:scaleX(0.8101);transform-origin:0 0;">CAP</div>
<div class="a t" style="left:962.40px;top:750.22px;font-size:12px;line-height:14px;color:#fff;font-weight:400;transform:scaleX(0.8050);transform-origin:0 0;">NUM</div>
<div class="a t" style="left:990.30px;top:750.22px;font-size:12px;line-height:14px;color:#6f7b90;font-weight:400;transform:scaleX(0.7798);transform-origin:0 0;">SC</div>
<svg class="a" style="left:1010px;top:757px;" width="12" height="9" viewBox="0 0 12 9"><rect x="8" y="0" width="2" height="2" fill="#dfe3ea"/><rect x="4" y="3.5" width="2" height="2" fill="#dfe3ea"/><rect x="8" y="3.5" width="2" height="2" fill="#dfe3ea"/><rect x="0" y="7" width="2" height="2" fill="#dfe3ea"/><rect x="4" y="7" width="2" height="2" fill="#dfe3ea"/><rect x="8" y="7" width="2" height="2" fill="#dfe3ea"/></svg>
</body></html>
